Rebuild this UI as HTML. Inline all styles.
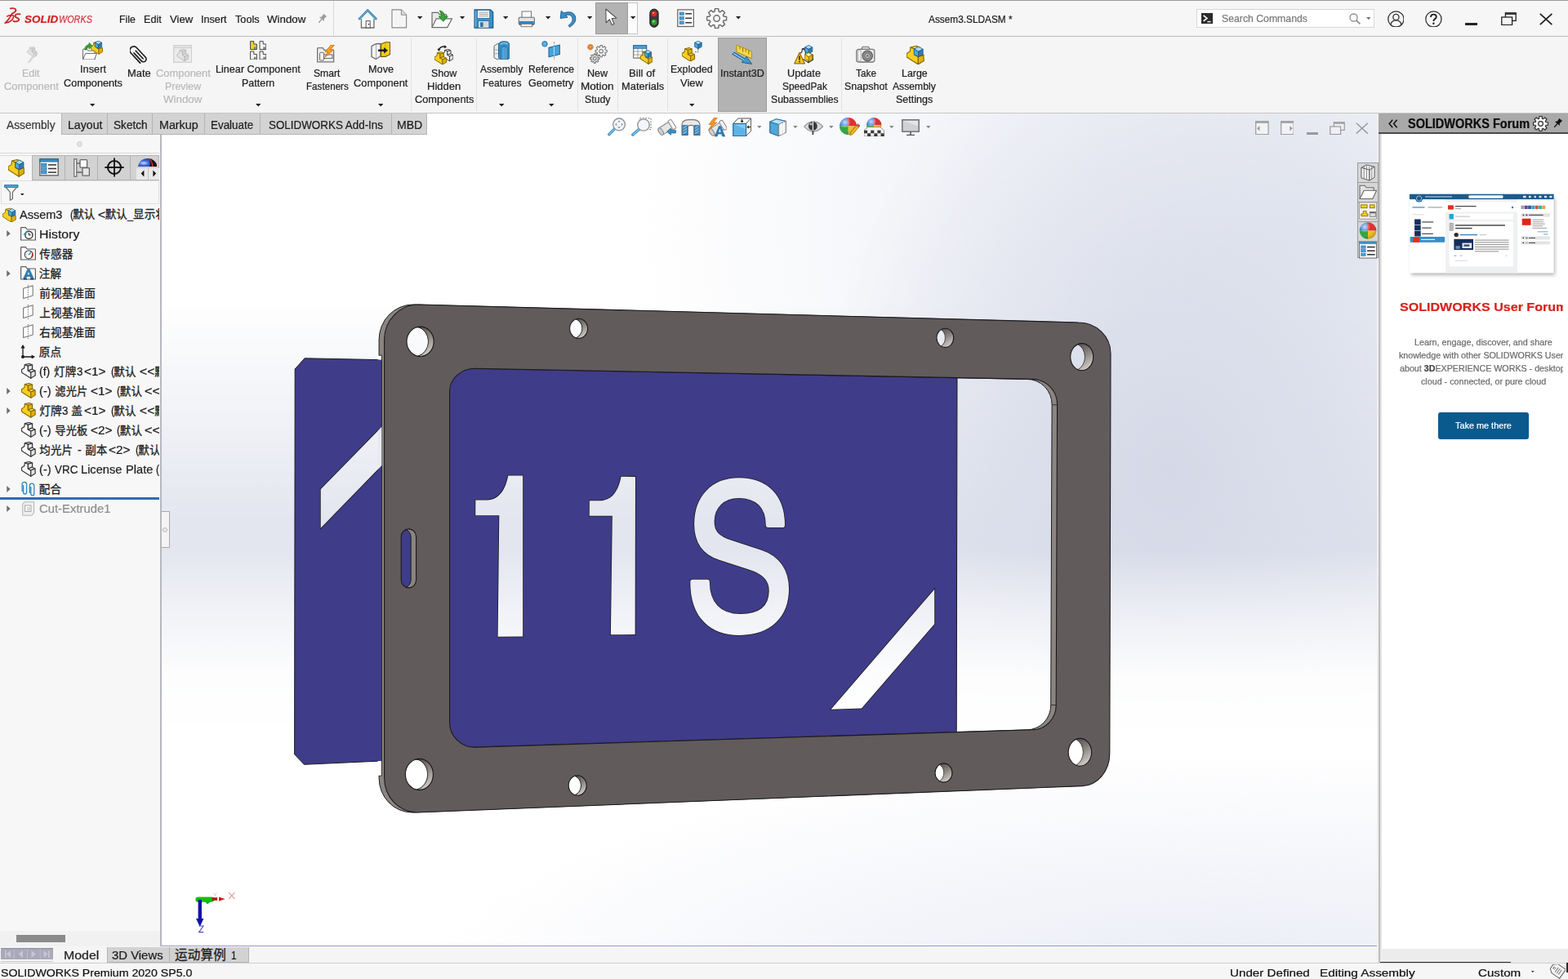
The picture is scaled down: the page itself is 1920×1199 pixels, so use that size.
<!DOCTYPE html><html><head><meta charset="utf-8"><title>SOLIDWORKS</title><style>
*{margin:0;padding:0}
html,body{width:1920px;height:1199px;overflow:hidden;background:#f5f5f5}
body{font-family:"Liberation Sans",sans-serif;position:relative}
.abs{position:absolute;display:block}
.t{position:absolute;white-space:pre;transform-origin:0 50%;display:block;-webkit-text-stroke:.22px currentColor}
.layer{position:absolute;left:0;top:0;height:1199px;overflow:hidden}
.cj{font-family:"Liberation Sans","Noto Sans CJK SC",sans-serif;fill:#1e1e1e;stroke:#1e1e1e;stroke-width:.3px;letter-spacing:.2px}
</style></head><body>
<div class="abs" id="vp" style="left:197.8px;top:139.2px;width:1488.6px;height:1019px;background:radial-gradient(ellipse 1000px 300px at 88% 106%, rgba(231,234,244,.95) 0%, rgba(231,234,244,0) 100%),linear-gradient(to bottom, rgba(255,255,255,0) 535px, rgba(255,255,255,.5) 610px, rgba(255,255,255,.93) 690px, #fff 770px),radial-gradient(ellipse 440px 570px at 1236px 440px, rgba(213,217,231,1) 0%, rgba(213,217,231,.6) 45%, rgba(213,217,231,0) 100%),radial-gradient(ellipse 820px 620px at 1400px 140px, rgba(229,232,241,.95) 0%, rgba(229,232,241,.5) 50%, rgba(229,232,241,0) 100%),linear-gradient(to bottom, rgba(227,230,239,0) 230px, rgba(227,230,239,1) 500px, rgba(227,230,239,1) 100%),#fff"></div>
<svg class="abs" style="left:0;top:0" width="1920" height="1199" viewBox="0 0 1920 1199">
<defs><linearGradient id="wallg" x1="0" y1="0" x2="0.4" y2="1"><stop offset="0" stop-color="#4d4848"/><stop offset=".55" stop-color="#8d8882"/><stop offset="1" stop-color="#cfcbc4"/></linearGradient><clipPath id="cwin"><path d="M582,451.3 L1264,464.4 A30.6,31 0 0 1 1294.6,495.8 L1293.2,863.5 A29.2,30 0 0 1 1264,893.8 L582,915.2 A31.4,30 0 0 1 550.6,885 L550.6,479 A31.4,28 0 0 1 582,451.3Z"/></clipPath><clipPath id="cslot"><path d="M491.2,657.5 a9.2,9.6 0 0 1 18.4,0 L509.6,710.3 a9.2,9.6 0 0 1 -18.4,0Z"/></clipPath></defs>
<mask id="pm" maskUnits="userSpaceOnUse" x="340" y="420" width="860" height="540"><rect x="340" y="420" width="860" height="540" fill="#fff"/><path d="M963.1,721.3C963.1,699.3 952.0,683.3 932.2,676.7L895.7,664.8C878.1,659.1 871.7,652.1 871.7,638.4C871.8,620.4 884.9,607.0 904.5,607.1C927.6,607.2 940.7,620.1 940.7,643.1L958.1,643.2C958.1,608.5 938.5,588.4 905.1,588.2C873.2,588.0 853.2,609.3 853.0,641.5C852.9,663.3 862.3,677.0 881.6,683.1L917.8,694.8C936.2,700.6 944.6,709.6 944.6,723.6C944.5,743.2 932.5,754.8 907.3,754.9C879.5,755.1 865.9,738.1 866.0,712.6L848.2,712.6C848.0,755.0 871.4,775.3 906.0,775.1C943.1,774.8 963.1,753.1 963.1,721.3Z" fill="#000" stroke="#000" stroke-width="5.8" stroke-linejoin="round"/><path d="M640.2,582.6L640.2,779.4L609.6,779.7L611.3,631.3L582.2,631.3L582.3,612.5L596.8,612.5C611.3,611.6 618.9,600.0 622.2,582.5Z M778.0,583.9L777.6,777.0L747.9,777.3L749.8,631.8L721.7,631.7L721.8,613.2L735.9,613.2C749.9,612.4 757.3,600.9 760.5,583.8Z M1144.2,721.7 L1144.2,764.2 L1055,867.5 L1017.5,868.7Z M392.7,599.3 L480,509.9 L480,557.1 L392.7,646.8Z" fill="#000"/></mask>
<g mask="url(#pm)"><path d="M361.2,452 L373,438.8 L1172,454.5 L1171.2,900 L372.5,936.3 L360.6,923.8Z" fill="#3f3c89"/><path d="M963.1,721.3C963.1,699.3 952.0,683.3 932.2,676.7L895.7,664.8C878.1,659.1 871.7,652.1 871.7,638.4C871.8,620.4 884.9,607.0 904.5,607.1C927.6,607.2 940.7,620.1 940.7,643.1L958.1,643.2C958.1,608.5 938.5,588.4 905.1,588.2C873.2,588.0 853.2,609.3 853.0,641.5C852.9,663.3 862.3,677.0 881.6,683.1L917.8,694.8C936.2,700.6 944.6,709.6 944.6,723.6C944.5,743.2 932.5,754.8 907.3,754.9C879.5,755.1 865.9,738.1 866.0,712.6L848.2,712.6C848.0,755.0 871.4,775.3 906.0,775.1C943.1,774.8 963.1,753.1 963.1,721.3Z" fill="none" stroke="#1c1a1e" stroke-width="7.3" stroke-linejoin="round"/><path d="M640.2,582.6L640.2,779.4L609.6,779.7L611.3,631.3L582.2,631.3L582.3,612.5L596.8,612.5C611.3,611.6 618.9,600.0 622.2,582.5Z M778.0,583.9L777.6,777.0L747.9,777.3L749.8,631.8L721.7,631.7L721.8,613.2L735.9,613.2C749.9,612.4 757.3,600.9 760.5,583.8Z M1144.2,721.7 L1144.2,764.2 L1055,867.5 L1017.5,868.7Z M392.7,599.3 L480,509.9 L480,557.1 L392.7,646.8Z" fill="none" stroke="#1c1a1e" stroke-width="1.6"/></g>
<path d="M361.2,452 L373,438.8 L1172,454.5 L1171.2,900 L372.5,936.3 L360.6,923.8Z" fill="none" stroke="#1c1a1e" stroke-width="1" stroke-linejoin="round"/>
<path d="M512.5,373 L1321,395 A39,38 0 0 1 1360,433 L1358.8,923 A34,40 0 0 1 1325,962.6 L511,995 A40.4,42 0 0 1 470.6,953 L470.6,416 A41.9,43 0 0 1 512.5,373Z M582,451.3 L1264,464.4 A30.6,31 0 0 1 1294.6,495.8 L1293.2,863.5 A29.2,30 0 0 1 1264,893.8 L582,915.2 A31.4,30 0 0 1 550.6,885 L550.6,479 A31.4,28 0 0 1 582,451.3Z M491.2,657.5 a9.2,9.6 0 0 1 18.4,0 L509.6,710.3 a9.2,9.6 0 0 1 -18.4,0Z M498.00,418.30 a16.60,18.20 0 1 0 33.20,0 a16.60,18.20 0 1 0 -33.20,0Z M1310.70,437.20 a14.00,16.60 0 1 0 28.00,0 a14.00,16.60 0 1 0 -28.00,0Z M1308.20,921.30 a14.20,16.90 0 1 0 28.40,0 a14.20,16.90 0 1 0 -28.40,0Z M496.40,948.40 a17.00,19.00 0 1 0 34.00,0 a17.00,19.00 0 1 0 -34.00,0Z M697.60,402.30 a11.00,12.00 0 1 0 22.00,0 a11.00,12.00 0 1 0 -22.00,0Z M1146.90,413.80 a10.40,11.60 0 1 0 20.80,0 a10.40,11.60 0 1 0 -20.80,0Z M1145.00,946.50 a10.50,11.60 0 1 0 21.00,0 a10.50,11.60 0 1 0 -21.00,0Z M696.20,962.00 a11.00,12.20 0 1 0 22.00,0 a11.00,12.20 0 1 0 -22.00,0Z" transform="translate(-6.5,0)" fill="#8a8580" fill-rule="evenodd" stroke="#1c1a1e" stroke-width="1"/>
<path d="M511.10,400.20 A16.90,18.50 0 1 1 511.10,436.40 A16.90,18.50 0 0 0 511.10,400.20 Z" fill="url(#wallg)" stroke="#1c1a1e" stroke-width=".7"/>
<path d="M1319.40,421.50 A14.30,16.90 0 1 1 1319.40,452.90 A14.30,16.90 0 0 0 1319.40,421.50 Z" fill="url(#wallg)" stroke="#1c1a1e" stroke-width=".7"/>
<path d="M1317.10,905.29 A14.50,17.20 0 1 1 1317.10,937.31 A14.50,17.20 0 0 0 1317.10,905.29 Z" fill="url(#wallg)" stroke="#1c1a1e" stroke-width=".7"/>
<path d="M509.90,929.50 A17.30,19.30 0 1 1 509.90,967.30 A17.30,19.30 0 0 0 509.90,929.50 Z" fill="url(#wallg)" stroke="#1c1a1e" stroke-width=".7"/>
<path d="M705.10,390.60 A11.30,12.30 0 1 1 705.10,414.00 A11.30,12.30 0 0 0 705.10,390.60 Z" fill="url(#wallg)" stroke="#1c1a1e" stroke-width=".7"/>
<path d="M1152.00,403.46 A10.70,11.90 0 1 1 1152.00,424.14 A10.70,11.90 0 0 0 1152.00,403.46 Z" fill="url(#wallg)" stroke="#1c1a1e" stroke-width=".7"/>
<path d="M1150.20,936.13 A10.80,11.90 0 1 1 1150.20,956.87 A10.80,11.90 0 0 0 1150.20,936.13 Z" fill="url(#wallg)" stroke="#1c1a1e" stroke-width=".7"/>
<path d="M703.70,950.11 A11.30,12.50 0 1 1 703.70,973.89 A11.30,12.50 0 0 0 703.70,950.11 Z" fill="url(#wallg)" stroke="#1c1a1e" stroke-width=".7"/>
<path d="M512.5,373 L1321,395 A39,38 0 0 1 1360,433 L1358.8,923 A34,40 0 0 1 1325,962.6 L511,995 A40.4,42 0 0 1 470.6,953 L470.6,416 A41.9,43 0 0 1 512.5,373Z M582,451.3 L1264,464.4 A30.6,31 0 0 1 1294.6,495.8 L1293.2,863.5 A29.2,30 0 0 1 1264,893.8 L582,915.2 A31.4,30 0 0 1 550.6,885 L550.6,479 A31.4,28 0 0 1 582,451.3Z M491.2,657.5 a9.2,9.6 0 0 1 18.4,0 L509.6,710.3 a9.2,9.6 0 0 1 -18.4,0Z M498.00,418.30 a16.60,18.20 0 1 0 33.20,0 a16.60,18.20 0 1 0 -33.20,0Z M1310.70,437.20 a14.00,16.60 0 1 0 28.00,0 a14.00,16.60 0 1 0 -28.00,0Z M1308.20,921.30 a14.20,16.90 0 1 0 28.40,0 a14.20,16.90 0 1 0 -28.40,0Z M496.40,948.40 a17.00,19.00 0 1 0 34.00,0 a17.00,19.00 0 1 0 -34.00,0Z M697.60,402.30 a11.00,12.00 0 1 0 22.00,0 a11.00,12.00 0 1 0 -22.00,0Z M1146.90,413.80 a10.40,11.60 0 1 0 20.80,0 a10.40,11.60 0 1 0 -20.80,0Z M1145.00,946.50 a10.50,11.60 0 1 0 21.00,0 a10.50,11.60 0 1 0 -21.00,0Z M696.20,962.00 a11.00,12.20 0 1 0 22.00,0 a11.00,12.20 0 1 0 -22.00,0Z" fill="#615b5b" fill-rule="evenodd" stroke="#1c1a1e" stroke-width="1.1"/>
<path d="M462.6,435.2H467.4V440.7H462.6Z M462.6,932.1H467.4V950.2H462.6Z" fill="#fff"/>
<path d="M462.6,440.7H467.4V932.1H462.6Z" fill="#3f3c89" mask="url(#pm)"/>
<path d="M463.9,435.2H467.4V950.2H463.6" fill="none" stroke="#1c1a1e" stroke-width=".9"/>
<path d="M462.4,527.9L467.4,522.8V570.1L462.4,575.2Z" fill="#e9ebf3"/>
<path d="M1288.2,495.8H1294.6 M1286.8,863.5H1293.2" stroke="#1c1a1e" stroke-width=".8"/>
</svg>
<div class="abs" style="left:0px;top:0px;width:1920px;height:45px;background:#f6f6f6;"></div>
<div class="abs" style="left:0px;top:0px;width:1920px;height:1px;background:#9a9a9a;"></div>
<div class="abs" style="left:0px;top:44px;width:1920px;height:1.4px;background:#bdbdbd;"></div>
<div class="abs" style="left:408.4px;top:1px;width:1px;height:43px;background:#d9d9d9;"></div>
<div class="abs" style="left:1465px;top:10.5px;width:217.5px;height:23.3px;background:#fff;border:1px solid #d6d6d6;box-sizing:border-box"></div>
<div class="abs" style="left:0px;top:45.4px;width:1920px;height:93px;background:#f5f5f5;"></div>
<div class="abs" style="left:878.8px;top:45.7px;width:60.4px;height:91.2px;background:#b3b3b3;border:1px solid #9c9c9c;box-sizing:border-box"></div>
<div class="abs" style="left:503.3px;top:47px;width:1px;height:89px;background:#e2e2e2;"></div>
<div class="abs" style="left:583.3px;top:47px;width:1px;height:89px;background:#e2e2e2;"></div>
<div class="abs" style="left:706.9px;top:47px;width:1px;height:89px;background:#e2e2e2;"></div>
<div class="abs" style="left:756.2px;top:47px;width:1px;height:89px;background:#e2e2e2;"></div>
<div class="abs" style="left:816.7px;top:47px;width:1px;height:89px;background:#e2e2e2;"></div>
<div class="abs" style="left:1029.8px;top:47px;width:1px;height:89px;background:#e2e2e2;"></div>
<div class="abs" style="left:0px;top:138px;width:1920px;height:1.2px;background:#c6c6c6;"></div>
<svg class="abs" style="left:110.30px;top:127.20px" width="6.4" height="3.4"><path d="M0,0H6.4L3.2,3.4Z" fill="#222"/></svg>
<svg class="abs" style="left:312.60px;top:127.20px" width="6.4" height="3.4"><path d="M0,0H6.4L3.2,3.4Z" fill="#222"/></svg>
<svg class="abs" style="left:463.00px;top:127.20px" width="6.4" height="3.4"><path d="M0,0H6.4L3.2,3.4Z" fill="#222"/></svg>
<svg class="abs" style="left:610.80px;top:127.20px" width="6.4" height="3.4"><path d="M0,0H6.4L3.2,3.4Z" fill="#222"/></svg>
<svg class="abs" style="left:671.60px;top:127.20px" width="6.4" height="3.4"><path d="M0,0H6.4L3.2,3.4Z" fill="#222"/></svg>
<svg class="abs" style="left:843.80px;top:127.20px" width="6.4" height="3.4"><path d="M0,0H6.4L3.2,3.4Z" fill="#222"/></svg>
<div class="abs" style="left:0px;top:139.2px;width:197.8px;height:26px;background:#f5f5f5;"></div>
<div class="abs" style="left:75.4px;top:139.2px;width:447.6px;height:25.4px;background:#d3d3d3;border:1px solid #b4b4b4;border-top:none;box-sizing:border-box"></div>
<div class="abs" style="left:131.3px;top:139.2px;width:1px;height:25px;background:#b4b4b4;"></div>
<div class="abs" style="left:186.4px;top:139.2px;width:1px;height:25px;background:#b4b4b4;"></div>
<div class="abs" style="left:250.3px;top:139.2px;width:1px;height:25px;background:#b4b4b4;"></div>
<div class="abs" style="left:318.3px;top:139.2px;width:1px;height:25px;background:#b4b4b4;"></div>
<div class="abs" style="left:478.6px;top:139.2px;width:1px;height:25px;background:#b4b4b4;"></div>
<div class="abs" style="left:0px;top:165.2px;width:196px;height:994px;background:#f7f7f7;"></div>
<div class="abs" style="left:0px;top:187.2px;width:196px;height:1px;background:#d9d9d9;"></div>
<div class="abs" style="left:93.6px;top:173.3px;width:7px;height:7px;border-radius:50%;box-sizing:border-box;border:1.6px solid #cfcfcf;background:#e3e3e3"></div>
<div class="abs" style="left:39.4px;top:190px;width:156px;height:30.6px;background:#d2d2d2;border:1px solid #b2b2b2;box-sizing:border-box"></div>
<div class="abs" style="left:0px;top:190px;width:39.4px;height:1px;background:#dcdcdc;"></div>
<div class="abs" style="left:79px;top:190px;width:1px;height:30.6px;background:#b2b2b2;"></div>
<div class="abs" style="left:119.4px;top:190px;width:1px;height:30.6px;background:#b2b2b2;"></div>
<div class="abs" style="left:159.4px;top:190px;width:1px;height:30.6px;background:#b2b2b2;"></div>
<div class="abs" style="left:166.8px;top:206px;width:28px;height:14px;background:#e9e9e9;"></div>
<div class="abs" style="left:181px;top:206px;width:1px;height:14px;background:#c2c2c2;"></div>
<svg class="abs" style="left:172px;top:208px" width="20" height="9"><path d="M4.4,0.4V8.4L0.6,4.4Z M15.4,0.4V8.4L19.2,4.4Z" fill="#111"/></svg>
<div class="abs" style="left:1.3px;top:221.2px;width:193.6px;height:29px;background:#f7f7f7;border:1px solid #dfdfdf;box-sizing:border-box"></div>
<svg class="abs" style="left:25.10px;top:236.60px" width="4.6" height="2.8"><path d="M0,0H4.6L2.3,2.8Z" fill="#222"/></svg>
<svg class="abs" style="left:8.2px;top:282.0px" width="5" height="8"><path d="M0.3,0L4.6,4L0.3,8Z" fill="#6b6b6b"/></svg>
<svg class="abs" style="left:8.2px;top:330.5px" width="5" height="8"><path d="M0.3,0L4.6,4L0.3,8Z" fill="#6b6b6b"/></svg>
<svg class="abs" style="left:8.2px;top:474.5px" width="5" height="8"><path d="M0.3,0L4.6,4L0.3,8Z" fill="#6b6b6b"/></svg>
<svg class="abs" style="left:8.2px;top:498.5px" width="5" height="8"><path d="M0.3,0L4.6,4L0.3,8Z" fill="#6b6b6b"/></svg>
<svg class="abs" style="left:8.2px;top:594.5px" width="5" height="8"><path d="M0.3,0L4.6,4L0.3,8Z" fill="#6b6b6b"/></svg>
<div class="abs" style="left:0px;top:608.9px;width:195px;height:3.1px;background:#2f6db3;"></div>
<svg class="abs" style="left:8.2px;top:618.5px" width="5" height="8"><path d="M0.3,0L4.6,4L0.3,8Z" fill="#6b6b6b"/></svg>
<div class="abs" style="left:0px;top:1159px;width:1920px;height:20px;background:#f5f5f5;"></div>
<div class="abs" style="left:197.8px;top:1157.6px;width:1488.6px;height:1.4px;background:#9b9bc4;"></div>
<div class="abs" style="left:1.3px;top:1160.8px;width:63.8px;height:14.6px;background:#a9a9b9;border-top:1.4px solid #8e8ea2;box-sizing:border-box"></div>
<svg class="abs" style="left:1.3px;top:1162.2px" width="64" height="13"><g fill="#c6c6d2"><path d="M5,2h1.6v9H5z M12,2v9L6.8,6.5z M27,2v9l-5.6-4.5z M37.5,2v9l5.6-4.5z M52.5,2v9l5.2-4.5z M58,2h1.6v9H58z"/></g><g stroke="#bcbccb"><path d="M16.3,0V13 M32.3,0V13 M48.3,0V13"/></g></svg>
<div class="abs" style="left:1.3px;top:1177.4px;width:63.8px;height:1px;background:#c9c9c9;"></div>
<div class="abs" style="left:130.6px;top:1160px;width:174.2px;height:18.8px;background:#d2d2d2;border:1px solid #b4b4b4;border-top:none;box-sizing:border-box"></div>
<div class="abs" style="left:206.8px;top:1160px;width:1px;height:18.4px;background:#b4b4b4;"></div>
<div class="abs" style="left:0px;top:1178.8px;width:1920px;height:20.2px;background:#f6f6f6;"></div>
<div class="abs" style="left:0px;top:1178.6px;width:1920px;height:1px;background:#cfcfcf;"></div>
<svg class="abs" style="left:1875.00px;top:1189.20px" width="3.6" height="2.2"><path d="M0,0H3.6L1.8,2.2Z" fill="#333"/></svg>
<div class="abs" style="left:1686.4px;top:139.2px;width:3.6px;height:1040px;background:#f0f0f0;"></div>
<div class="abs" style="left:1688px;top:139.2px;width:1.6px;height:1040px;background:#bdbdbd;"></div>
<div class="abs" style="left:1690px;top:163.6px;width:230px;height:998.2px;background:#fff;"></div>
<div class="abs" style="left:1690px;top:163.6px;width:1.6px;height:998px;background:#e4e4e4;"></div>
<div class="abs" style="left:1690px;top:1161.6px;width:230px;height:17px;background:#ececec;"></div>
<div class="abs" style="left:1690px;top:1177.6px;width:160px;height:1.6px;background:#2b2b2b;"></div>
<div class="abs" style="left:1918.4px;top:1179px;width:1.6px;height:12px;background:#2b2b2b;"></div>
<div class="abs" style="left:1687.6px;top:139.4px;width:232.4px;height:24.2px;background:#a9a9a9;"></div>
<div class="abs" style="left:1687.6px;top:162.2px;width:232.4px;height:1.6px;background:#4a4a4a;"></div>
<svg class="abs" style="left:1699.6px;top:145.6px" width="12" height="11"><path d="M5.2,.8L1.2,5.5L5.2,10.2 M10.6,.8L6.6,5.5L10.6,10.2" fill="none" stroke="#111" stroke-width="1.5"/></svg>
<div class="abs" style="left:1761px;top:505px;width:111.2px;height:32.8px;background:#0b5a8d;border-radius:3px"></div>
<svg class="abs" style="left:1720px;top:232px" width="192" height="112" viewBox="1720 232 192 112"><defs><filter id="ts" x="-10%" y="-10%" width="120%" height="130%"><feGaussianBlur stdDeviation="2.2"/></filter></defs><rect x="1728" y="242" width="176" height="95" fill="#000" opacity=".28" filter="url(#ts)"/><rect x="1726" y="237.7" width="176.6" height="96.7" fill="#fff"/><rect x="1770" y="244" width="88" height="90.4" fill="#eff0f1"/><rect x="1726" y="237.7" width="176.6" height="6.4" fill="#1b5b8c"/><circle cx="1737.6" cy="243" r="4.6" fill="#1b5b8c"/><circle cx="1737.6" cy="243" r="3.1" fill="none" stroke="#cfe0ee" stroke-width=".7"/><rect x="1798.4" y="239.2" width="42" height="3.6" rx="1" fill="#fff"/><rect x="1745" y="240.3" width="33" height="1.3" fill="#9fc0dc"/><g fill="#dfe9f2"><rect x="1865" y="239.8" width="3.6" height="2.4"/><rect x="1872" y="239.8" width="2.6" height="2.4"/><rect x="1878.6" y="239.8" width="2.2" height="2.4"/><rect x="1884.6" y="239.8" width="2.8" height="2.4"/><rect x="1891" y="239.8" width="3" height="2.4"/><rect x="1897.4" y="239.8" width="3" height="2.4"/></g><rect x="1729.5" y="253.4" width="15" height="1.1" fill="#2a78b8"/><rect x="1748.6" y="253.4" width="17.6" height="1.1" fill="#9a9a9a"/><rect x="1729.6" y="262.4" width="14" height=".9" fill="#d4d4d4"/><rect x="1732.1" y="268.5" width="7.6" height="6.6" fill="#14305e"/><rect x="1741.2" y="271.3" width="14" height="1.3" fill="#555"/><rect x="1732.1" y="275.7" width="7.6" height="6.6" fill="#14305e"/><rect x="1741.2" y="278.5" width="11.4" height="1.3" fill="#555"/><rect x="1732.1" y="282.9" width="7.6" height="6.6" fill="#14305e"/><rect x="1741.2" y="285.7" width="13.6" height="1.3" fill="#555"/><rect x="1726.6" y="290" width="42.6" height="6.8" fill="#3a8cc6"/><rect x="1730" y="290.6" width="8" height="6.2" fill="#e0301e"/><rect x="1740" y="292.8" width="17" height="1.2" fill="#e8f1f8"/><rect x="1770" y="247.5" width="88" height="12" fill="#fff"/><rect x="1773" y="251.4" width="6.9" height="5.2" fill="#e0301e"/><rect x="1782" y="252" width="25.6" height="1.2" fill="#444"/><rect x="1782" y="255.2" width="7" height=".9" fill="#999"/><circle cx="1852" cy="254" r="1.2" fill="#2a78b8"/><rect x="1774.5" y="261.5" width="78.4" height="7.4" fill="#fff"/><rect x="1774.5" y="262" width="5.4" height="6.5" fill="#1ea7d8"/><rect x="1782" y="264.6" width="18" height="1" fill="#bbb"/><rect x="1774.5" y="271.4" width="78.4" height="55" fill="#fff"/><rect x="1775" y="273" width="4.6" height="9.6" fill="#b9b9b9" stroke="#888" stroke-width=".4"/><rect x="1782" y="275.2" width="61" height="1.5" fill="#4a4a4a"/><rect x="1782" y="278.8" width="20.6" height="1.5" fill="#4a4a4a"/><circle cx="1783.2" cy="287.6" r="2.7" fill="#3a2a28"/><rect x="1788" y="287" width="21" height="1.2" fill="#2a78b8"/><rect x="1812" y="287.2" width="8" height=".9" fill="#bbb"/><rect x="1780.4" y="292.8" width="23.6" height="13.2" fill="#132e5c"/><rect x="1790.5" y="297.6" width="11.6" height="6.4" fill="#e8edf3"/><rect x="1792.4" y="299.4" width="7" height="2.4" fill="#3b4f6e"/><rect x="1782.4" y="301.2" width="5.4" height="3.6" fill="#6f8fb0"/><rect x="1806" y="293.6" width="41.6" height="1" fill="#8c8c8c"/><rect x="1806" y="296.4" width="41.6" height="1" fill="#8c8c8c"/><rect x="1806" y="299.1" width="41.6" height="1" fill="#8c8c8c"/><rect x="1806" y="301.9" width="41.6" height="1" fill="#8c8c8c"/><rect x="1806" y="304.6" width="41.6" height="1" fill="#8c8c8c"/><rect x="1806" y="307.4" width="29" height="1" fill="#8c8c8c"/><rect x="1780.4" y="312.6" width="3" height="1" fill="#999"/><rect x="1787.4" y="312.6" width="3.4" height="1" fill="#bbb"/><rect x="1843.6" y="312.6" width="1.6" height="1" fill="#bbb"/><rect x="1782" y="318.8" width="15" height=".8" fill="#ccc"/><rect x="1862.5" y="251.7" width="3.9" height="4.4" rx=".6" fill="#9aa0a8"/><rect x="1866.8" y="251.7" width="3.9" height="4.4" rx=".6" fill="#7a3b9a"/><rect x="1871.1" y="251.7" width="3.9" height="4.4" rx=".6" fill="#2a5fa8"/><rect x="1875.4" y="251.7" width="3.9" height="4.4" rx=".6" fill="#35a0d8"/><rect x="1879.7" y="251.7" width="3.9" height="4.4" rx=".6" fill="#e04a3a"/><rect x="1884.0" y="251.7" width="3.9" height="4.4" rx=".6" fill="#2fb5a0"/><rect x="1888.3" y="251.7" width="3.9" height="4.4" rx=".6" fill="#f0a030"/><rect x="1862.5" y="261.3" width="35.4" height="4.3" fill="#e3e3e3"/><rect x="1872" y="262.8" width="17.6" height="1.2" fill="#555"/><rect x="1864.6" y="262.6" width="1.6" height="1.6" fill="#333"/><rect x="1868.4" y="262.6" width="2" height="1.6" fill="#333"/><rect x="1863.7" y="267.7" width="10.8" height="8.1" fill="#e0241a"/><rect x="1876.4" y="268.6" width="14" height="1" fill="#9a9a9a"/><rect x="1876.4" y="271.2" width="13.5" height="1" fill="#9a9a9a"/><rect x="1876.4" y="273.7" width="15.4" height="1" fill="#9a9a9a"/><rect x="1876.4" y="276.2" width="12.6" height="1" fill="#9a9a9a"/><rect x="1876.4" y="278.8" width="17.5" height="1" fill="#9a9a9a"/><rect x="1882.6" y="283.4" width="13" height=".9" fill="#5a9fd0"/><rect x="1890" y="286.4" width="5.6" height=".9" fill="#5a9fd0"/><rect x="1862.5" y="289.5" width="35.4" height="3.9" fill="#e3e3e3"/><rect x="1872" y="290.9" width="8" height="1.1" fill="#555"/><rect x="1864.6" y="290.6" width="1.4" height="1.5" fill="#333"/><rect x="1868.4" y="290.4" width="2" height="2" fill="#777"/><rect x="1862.5" y="295.5" width="35.4" height="3.9" fill="#e3e3e3"/><rect x="1872" y="296.9" width="8" height="1.1" fill="#555"/><rect x="1864.6" y="296.6" width="1.4" height="1.5" fill="#333"/><rect x="1868.4" y="296.4" width="2" height="2" fill="#aaa"/></svg>
<div class="layer" style="width:195px"><span class="t" id="t55" style="left:24.36px;top:255.70px;font-size:14.3px;line-height:14.3px;color:#1e1e1e;transform:scaleX(1.0151);">Assem3</span><span class="t" id="t56" style="left:85.66px;top:255.70px;font-size:14.3px;line-height:14.3px;color:#1e1e1e;transform:scaleX(0.8574);">(</span><span class="t" id="t57" style="left:119.86px;top:255.70px;font-size:14.3px;line-height:14.3px;color:#1e1e1e;transform:scaleX(1.0984);">&lt;</span><span class="t" id="t58" style="left:155.96px;top:255.70px;font-size:14.3px;line-height:14.3px;color:#1e1e1e;transform:scaleX(0.8859);">_</span><span class="t" id="t59" style="left:47.86px;top:279.70px;font-size:14.3px;line-height:14.3px;color:#1e1e1e;transform:scaleX(1.1088);">History</span><span class="t" id="t60" style="left:48.16px;top:448.20px;font-size:14.3px;line-height:14.3px;color:#1e1e1e;transform:scaleX(0.9848);">(f)</span><span class="t" id="t61" style="left:93.76px;top:448.20px;font-size:14.3px;line-height:14.3px;color:#1e1e1e;transform:scaleX(0.9359);">3</span><span class="t" id="t62" style="left:103.16px;top:448.20px;font-size:14.3px;line-height:14.3px;color:#1e1e1e;transform:scaleX(1.0755);">&lt;1&gt;</span><span class="t" id="t63" style="left:135.66px;top:448.20px;font-size:14.3px;line-height:14.3px;color:#1e1e1e;transform:scaleX(0.8774);">(</span><span class="t" id="t64" style="left:170.66px;top:448.20px;font-size:14.3px;line-height:14.3px;color:#1e1e1e;transform:scaleX(1.0934);">&lt;&lt;</span><span class="t" id="t65" style="left:48.16px;top:472.20px;font-size:14.3px;line-height:14.3px;color:#1e1e1e;transform:scaleX(1.0276);">(-)</span><span class="t" id="t66" style="left:110.66px;top:472.20px;font-size:14.3px;line-height:14.3px;color:#1e1e1e;transform:scaleX(1.0755);">&lt;1&gt;</span><span class="t" id="t67" style="left:143.16px;top:472.20px;font-size:14.3px;line-height:14.3px;color:#1e1e1e;transform:scaleX(0.8774);">(</span><span class="t" id="t68" style="left:176.96px;top:472.20px;font-size:14.3px;line-height:14.3px;color:#1e1e1e;transform:scaleX(1.1345);">&lt;&lt;</span><span class="t" id="t69" style="left:76.26px;top:496.20px;font-size:14.3px;line-height:14.3px;color:#1e1e1e;transform:scaleX(0.9359);">3</span><span class="t" id="t70" style="left:103.16px;top:496.20px;font-size:14.3px;line-height:14.3px;color:#1e1e1e;transform:scaleX(1.0755);">&lt;1&gt;</span><span class="t" id="t71" style="left:135.66px;top:496.20px;font-size:14.3px;line-height:14.3px;color:#1e1e1e;transform:scaleX(0.8774);">(</span><span class="t" id="t72" style="left:170.66px;top:496.20px;font-size:14.3px;line-height:14.3px;color:#1e1e1e;transform:scaleX(1.0934);">&lt;&lt;</span><span class="t" id="t73" style="left:48.16px;top:520.20px;font-size:14.3px;line-height:14.3px;color:#1e1e1e;transform:scaleX(1.0276);">(-)</span><span class="t" id="t74" style="left:110.66px;top:520.20px;font-size:14.3px;line-height:14.3px;color:#1e1e1e;transform:scaleX(1.0755);">&lt;2&gt;</span><span class="t" id="t75" style="left:143.16px;top:520.20px;font-size:14.3px;line-height:14.3px;color:#1e1e1e;transform:scaleX(0.8774);">(</span><span class="t" id="t76" style="left:176.96px;top:520.20px;font-size:14.3px;line-height:14.3px;color:#1e1e1e;transform:scaleX(1.1345);">&lt;&lt;</span><span class="t" id="t77" style="left:94.96px;top:544.20px;font-size:14.3px;line-height:14.3px;color:#1e1e1e;transform:scaleX(1.0174);">-</span><span class="t" id="t78" style="left:133.16px;top:544.20px;font-size:14.3px;line-height:14.3px;color:#1e1e1e;transform:scaleX(1.0755);">&lt;2&gt;</span><span class="t" id="t79" style="left:165.66px;top:544.20px;font-size:14.3px;line-height:14.3px;color:#1e1e1e;transform:scaleX(0.8774);">(</span><span class="t" id="t80" style="left:48.16px;top:568.20px;font-size:14.3px;line-height:14.3px;color:#1e1e1e;transform:scaleX(1.0276);">(-)</span><span class="t" id="t81" style="left:66.86px;top:568.20px;font-size:14.3px;line-height:14.3px;color:#1e1e1e;transform:scaleX(0.9396);">VRC</span><span class="t" id="t82" style="left:99.36px;top:568.20px;font-size:14.3px;line-height:14.3px;color:#1e1e1e;transform:scaleX(1.0222);">License</span><span class="t" id="t83" style="left:153.76px;top:568.20px;font-size:14.3px;line-height:14.3px;color:#1e1e1e;transform:scaleX(1.0238);">Plate</span><span class="t" id="t84" style="left:191.26px;top:568.20px;font-size:14.3px;line-height:14.3px;color:#1e1e1e;transform:scaleX(0.8774);">(</span><span class="t" id="t85" style="left:48.16px;top:616.20px;font-size:14.3px;line-height:14.3px;color:#8e8e8e;transform:scaleX(1.0391);">Cut-Extrude1</span><svg class="abs" style="left:0;top:0" width="195" height="1199" viewBox="0 0 195 1199"><text class="cj" x="89.13" y="267.45" font-size="13.54">默认</text><text class="cj" x="128.63" y="267.45" font-size="13.54">默认</text><text class="cj" x="162.93" y="267.45" font-size="13.56">显示状</text><text class="cj" x="48.23" y="315.65" font-size="13.56">传感器</text><text class="cj" x="47.73" y="339.67" font-size="13.59">注解</text><text class="cj" x="48.23" y="363.67" font-size="13.59">前视基准面</text><text class="cj" x="48.23" y="387.67" font-size="13.59">上视基准面</text><text class="cj" x="48.23" y="411.67" font-size="13.59">右视基准面</text><text class="cj" x="47.73" y="435.67" font-size="13.59">原点</text><text class="cj" x="66.03" y="459.65" font-size="13.54">灯牌</text><text class="cj" x="139.33" y="459.65" font-size="13.54">默认</text><text class="cj" x="189.13" y="459.67" font-size="13.59">默</text><text class="cj" x="67.24" y="483.53" font-size="13.23">滤光片</text><text class="cj" x="146.83" y="483.65" font-size="13.54">默认</text><text class="cj" x="48.23" y="507.70" font-size="13.69">灯牌</text><text class="cj" x="87.33" y="507.67" font-size="13.59">盖</text><text class="cj" x="139.33" y="507.65" font-size="13.54">默认</text><text class="cj" x="189.13" y="507.67" font-size="13.59">默</text><text class="cj" x="67.24" y="531.53" font-size="13.23">导光板</text><text class="cj" x="146.83" y="531.65" font-size="13.54">默认</text><text class="cj" x="48.23" y="555.63" font-size="13.49">均光片</text><text class="cj" x="104.13" y="555.65" font-size="13.54">副本</text><text class="cj" x="169.33" y="555.65" font-size="13.54">默认</text><text class="cj" x="47.73" y="603.67" font-size="13.59">配合</text></svg></div>
<div class="abs" style="left:195px;top:165.2px;width:1.2px;height:994px;background:#f7f7f7;"></div>
<div class="abs" style="left:196.2px;top:165.2px;width:1.6px;height:994px;background:#b7b7bf;"></div>
<div class="abs" style="left:0px;top:1140px;width:196px;height:18.6px;background:#f1f1f1;"></div>
<div class="abs" style="left:19.7px;top:1144.7px;width:60.3px;height:9.2px;background:#8b8b8b;"></div>
<div class="abs" style="left:197.6px;top:626.3px;width:10.2px;height:45.2px;background:#f4f4f4;border:1px solid #a9a9ad;border-left:none;box-sizing:border-box"></div>
<div class="abs" style="left:198.6px;top:645.6px;width:6.8px;height:6.8px;border-radius:50%;box-sizing:border-box;border:1.4px solid #b8b8b8;background:#ececec"></div>
<div class="layer" style="width:1914px"><span class="t" id="t94" style="left:1713.80px;top:368.33px;font-size:15.5px;line-height:15.5px;color:#d5241c;font-weight:bold;transform:scaleX(1.0368);">SOLIDWORKS User Forum</span><span class="t" id="t95" style="left:1732.41px;top:413.69px;font-size:11px;line-height:11px;color:#6a6a6a;transform:scaleX(0.9784);">Learn, engage, discover, and share</span><span class="t" id="t96" style="left:1713.11px;top:429.59px;font-size:11px;line-height:11px;color:#6a6a6a;transform:scaleX(0.9718);">knowledge with other SOLIDWORKS Users</span><span class="t" id="t97" style="left:1713.71px;top:445.69px;font-size:11px;line-height:11px;color:#6a6a6a;transform:scaleX(0.9717);">about <b style="color:#444">3D</b>EXPERIENCE WORKS - desktop,</span><span class="t" id="t98" style="left:1740.31px;top:461.69px;font-size:11px;line-height:11px;color:#6a6a6a;transform:scaleX(0.9745);">cloud - connected, or pure cloud</span></div>
<span class="t" id="t1" style="left:146.43px;top:18.13px;font-size:12.6px;line-height:12.6px;color:#1e1e1e;transform:scaleX(0.9817);">File</span>
<span class="t" id="t2" style="left:176.43px;top:18.13px;font-size:12.6px;line-height:12.6px;color:#1e1e1e;transform:scaleX(1.0061);">Edit</span>
<span class="t" id="t3" style="left:208.43px;top:18.13px;font-size:12.6px;line-height:12.6px;color:#1e1e1e;transform:scaleX(1.0420);">View</span>
<span class="t" id="t4" style="left:246.43px;top:18.13px;font-size:12.6px;line-height:12.6px;color:#1e1e1e;transform:scaleX(1.0042);">Insert</span>
<span class="t" id="t5" style="left:288.23px;top:18.13px;font-size:12.6px;line-height:12.6px;color:#1e1e1e;transform:scaleX(1.0115);">Tools</span>
<span class="t" id="t6" style="left:327.43px;top:18.13px;font-size:12.6px;line-height:12.6px;color:#1e1e1e;transform:scaleX(1.0585);">Window</span>
<span class="t" id="t7" style="left:1137.03px;top:17.73px;font-size:12.6px;line-height:12.6px;color:#1e1e1e;transform:scaleX(0.9388);">Assem3.SLDASM *</span>
<span class="t" id="t8" style="left:30.41px;top:17.03px;font-size:13.2px;line-height:13.2px;color:#cf2228;font-weight:bold;transform:scaleX(1.0197);font-style:italic;">SOLID</span>
<span class="t" id="t9" style="left:71.81px;top:17.03px;font-size:13.2px;line-height:13.2px;color:#d4343a;transform:scaleX(0.8198);font-style:italic;">WORKS</span>
<span class="t" id="t10" style="left:1495.72px;top:16.96px;font-size:12.8px;line-height:12.8px;color:#7a7a7a;transform:scaleX(0.9577);">Search Commands</span>
<span class="t" id="t11" style="left:27.13px;top:83.53px;font-size:12.6px;line-height:12.6px;color:#b9b9b9;transform:scaleX(0.9879);">Edit</span>
<span class="t" id="t12" style="left:5.23px;top:100.13px;font-size:12.6px;line-height:12.6px;color:#b9b9b9;transform:scaleX(1.0251);">Component</span>
<span class="t" id="t13" style="left:97.73px;top:78.53px;font-size:12.6px;line-height:12.6px;color:#1e1e1e;transform:scaleX(1.0136);">Insert</span>
<span class="t" id="t14" style="left:78.23px;top:95.63px;font-size:12.6px;line-height:12.6px;color:#1e1e1e;transform:scaleX(1.0075);">Components</span>
<span class="t" id="t15" style="left:156.13px;top:83.53px;font-size:12.6px;line-height:12.6px;color:#1e1e1e;transform:scaleX(1.0298);">Mate</span>
<span class="t" id="t16" style="left:191.13px;top:83.53px;font-size:12.6px;line-height:12.6px;color:#b9b9b9;transform:scaleX(1.0267);">Component</span>
<span class="t" id="t17" style="left:201.93px;top:100.13px;font-size:12.6px;line-height:12.6px;color:#b9b9b9;transform:scaleX(0.9874);">Preview</span>
<span class="t" id="t18" style="left:200.43px;top:116.43px;font-size:12.6px;line-height:12.6px;color:#b9b9b9;transform:scaleX(1.0585);">Window</span>
<span class="t" id="t19" style="left:264.03px;top:78.53px;font-size:12.6px;line-height:12.6px;color:#1e1e1e;transform:scaleX(1.0022);">Linear Component</span>
<span class="t" id="t20" style="left:295.73px;top:95.63px;font-size:12.6px;line-height:12.6px;color:#1e1e1e;transform:scaleX(0.9911);">Pattern</span>
<span class="t" id="t21" style="left:384.03px;top:83.53px;font-size:12.6px;line-height:12.6px;color:#1e1e1e;transform:scaleX(0.9657);">Smart</span>
<span class="t" id="t22" style="left:375.03px;top:100.13px;font-size:12.6px;line-height:12.6px;color:#1e1e1e;transform:scaleX(0.9256);">Fasteners</span>
<span class="t" id="t23" style="left:451.13px;top:78.53px;font-size:12.6px;line-height:12.6px;color:#1e1e1e;transform:scaleX(1.0108);">Move</span>
<span class="t" id="t24" style="left:433.43px;top:95.63px;font-size:12.6px;line-height:12.6px;color:#1e1e1e;transform:scaleX(1.0205);">Component</span>
<span class="t" id="t25" style="left:527.73px;top:83.53px;font-size:12.6px;line-height:12.6px;color:#1e1e1e;transform:scaleX(0.9948);">Show</span>
<span class="t" id="t26" style="left:522.93px;top:100.13px;font-size:12.6px;line-height:12.6px;color:#1e1e1e;transform:scaleX(1.0358);">Hidden</span>
<span class="t" id="t27" style="left:507.73px;top:116.43px;font-size:12.6px;line-height:12.6px;color:#1e1e1e;transform:scaleX(1.0146);">Components</span>
<span class="t" id="t28" style="left:588.23px;top:78.53px;font-size:12.6px;line-height:12.6px;color:#1e1e1e;transform:scaleX(0.9552);">Assembly</span>
<span class="t" id="t29" style="left:590.73px;top:95.63px;font-size:12.6px;line-height:12.6px;color:#1e1e1e;transform:scaleX(0.9567);">Features</span>
<span class="t" id="t30" style="left:647.43px;top:78.53px;font-size:12.6px;line-height:12.6px;color:#1e1e1e;transform:scaleX(0.9627);">Reference</span>
<span class="t" id="t31" style="left:647.43px;top:95.63px;font-size:12.6px;line-height:12.6px;color:#1e1e1e;transform:scaleX(1.0024);">Geometry</span>
<span class="t" id="t32" style="left:718.83px;top:83.53px;font-size:12.6px;line-height:12.6px;color:#1e1e1e;transform:scaleX(1.0014);">New</span>
<span class="t" id="t33" style="left:711.43px;top:100.13px;font-size:12.6px;line-height:12.6px;color:#1e1e1e;transform:scaleX(1.0746);">Motion</span>
<span class="t" id="t34" style="left:715.73px;top:116.43px;font-size:12.6px;line-height:12.6px;color:#1e1e1e;transform:scaleX(0.9792);">Study</span>
<span class="t" id="t35" style="left:770.23px;top:83.53px;font-size:12.6px;line-height:12.6px;color:#1e1e1e;transform:scaleX(1.0430);">Bill of</span>
<span class="t" id="t36" style="left:760.93px;top:100.13px;font-size:12.6px;line-height:12.6px;color:#1e1e1e;transform:scaleX(1.0222);">Materials</span>
<span class="t" id="t37" style="left:821.33px;top:78.53px;font-size:12.6px;line-height:12.6px;color:#1e1e1e;transform:scaleX(0.9855);">Exploded</span>
<span class="t" id="t38" style="left:833.23px;top:95.63px;font-size:12.6px;line-height:12.6px;color:#1e1e1e;transform:scaleX(1.0272);">View</span>
<span class="t" id="t39" style="left:881.73px;top:83.53px;font-size:12.6px;line-height:12.6px;color:#1e1e1e;transform:scaleX(0.9969);">Instant3D</span>
<span class="t" id="t40" style="left:964.43px;top:83.53px;font-size:12.6px;line-height:12.6px;color:#1e1e1e;transform:scaleX(1.0081);">Update</span>
<span class="t" id="t41" style="left:957.73px;top:100.13px;font-size:12.6px;line-height:12.6px;color:#1e1e1e;transform:scaleX(0.9454);">SpeedPak</span>
<span class="t" id="t42" style="left:943.63px;top:116.43px;font-size:12.6px;line-height:12.6px;color:#1e1e1e;transform:scaleX(0.9686);">Subassemblies</span>
<span class="t" id="t43" style="left:1047.73px;top:83.53px;font-size:12.6px;line-height:12.6px;color:#1e1e1e;transform:scaleX(0.9383);">Take</span>
<span class="t" id="t44" style="left:1034.43px;top:100.13px;font-size:12.6px;line-height:12.6px;color:#1e1e1e;transform:scaleX(0.9931);">Snapshot</span>
<span class="t" id="t45" style="left:1104.03px;top:83.53px;font-size:12.6px;line-height:12.6px;color:#1e1e1e;transform:scaleX(0.9854);">Large</span>
<span class="t" id="t46" style="left:1093.23px;top:100.13px;font-size:12.6px;line-height:12.6px;color:#1e1e1e;transform:scaleX(0.9661);">Assembly</span>
<span class="t" id="t47" style="left:1096.93px;top:116.43px;font-size:12.6px;line-height:12.6px;color:#1e1e1e;transform:scaleX(0.9920);">Settings</span>
<span class="t" id="t48" style="left:8.38px;top:146.92px;font-size:13.8px;line-height:13.8px;color:#3a3a3a;transform:scaleX(0.9957);">Assembly</span>
<span class="t" id="t49" style="left:83.18px;top:146.92px;font-size:13.8px;line-height:13.8px;color:#1e1e1e;transform:scaleX(1.0254);">Layout</span>
<span class="t" id="t50" style="left:139.18px;top:146.92px;font-size:13.8px;line-height:13.8px;color:#1e1e1e;transform:scaleX(0.9867);">Sketch</span>
<span class="t" id="t51" style="left:195.38px;top:146.92px;font-size:13.8px;line-height:13.8px;color:#1e1e1e;transform:scaleX(1.0357);">Markup</span>
<span class="t" id="t52" style="left:258.38px;top:146.92px;font-size:13.8px;line-height:13.8px;color:#1e1e1e;transform:scaleX(0.9711);">Evaluate</span>
<span class="t" id="t53" style="left:328.98px;top:146.92px;font-size:13.8px;line-height:13.8px;color:#1e1e1e;transform:scaleX(0.9711);">SOLIDWORKS Add-Ins</span>
<span class="t" id="t54" style="left:485.88px;top:146.92px;font-size:13.8px;line-height:13.8px;color:#1e1e1e;transform:scaleX(1.0207);">MBD</span>
<span class="t" id="t86" style="left:78.08px;top:1164.12px;font-size:13.8px;line-height:13.8px;color:#1e1e1e;transform:scaleX(1.1537);">Model</span>
<span class="t" id="t87" style="left:136.88px;top:1164.12px;font-size:13.8px;line-height:13.8px;color:#1e1e1e;transform:scaleX(1.0783);">3D Views</span>
<span class="t" id="t88" style="left:282.78px;top:1164.12px;font-size:13.8px;line-height:13.8px;color:#1e1e1e;transform:scaleX(0.8553);">1</span>
<span class="t" id="t89" style="left:0.70px;top:1184.84px;font-size:13.3px;line-height:13.3px;color:#111;transform:scaleX(1.0641);">SOLIDWORKS Premium 2020 SP5.0</span>
<span class="t" id="t90" style="left:1506.20px;top:1184.84px;font-size:13.3px;line-height:13.3px;color:#111;transform:scaleX(1.1407);">Under Defined</span>
<span class="t" id="t91" style="left:1616.20px;top:1184.84px;font-size:13.3px;line-height:13.3px;color:#111;transform:scaleX(1.1524);">Editing Assembly</span>
<span class="t" id="t92" style="left:1810.40px;top:1184.84px;font-size:13.3px;line-height:13.3px;color:#111;transform:scaleX(1.1391);">Custom</span>
<span class="t" id="t93" style="left:1723.80px;top:143.99px;font-size:15.6px;line-height:15.6px;color:#0c0c0c;font-weight:bold;transform:scaleX(0.9306);">SOLIDWORKS Forum</span>
<span class="t" id="t99" style="left:1782.30px;top:516.12px;font-size:11.2px;line-height:11.2px;color:#fff;transform:scaleX(0.9719);">Take me there</span>
<svg class="abs" style="left:0;top:0" width="1920" height="1199" viewBox="0 0 1920 1199"><text class="cj" x="213.89" y="1175.32" font-size="15.59">运动算例</text></svg>
<svg class="abs" style="left:5.00px;top:9.00px" width="21.20" height="20.80" viewBox="0 0 21 21"><g fill="none" stroke="#cf2228" stroke-linecap="round" stroke-linejoin="round"><path d="M7.6,1.4Q13.6,.4 14.4,3.2Q14.6,5.6 9.8,7.6" stroke-width="1.9"/><path d="M9.2,8.2Q7,14 1,19.4Q10.4,17.8 11.6,11.4Q11.8,9.6 8.6,9.6Q5.8,9.8 3.6,11" stroke-width="1.7"/><path d="M19.6,8.4Q14,7.6 13.4,10.4Q13.4,12.4 16.4,13.2Q19.2,14.4 17.6,16.4Q15.4,18.2 11.4,17.2" stroke-width="1.9"/></g></svg>
<svg class="abs" style="left:386.60px;top:16.20px" width="14.40" height="14.40" viewBox="0 0 14 14"><g transform="rotate(40 7 7)"><path d="M4.6,1H9.4L8.8,5.2L10.8,7.4H3.2L5.2,5.2Z" fill="#9b9b9b"/><path d="M7,7.4V13" stroke="#9b9b9b" stroke-width="1.3"/></g></svg>
<svg class="abs" style="left:437.80px;top:11.20px" width="24.40" height="24.40" viewBox="0 0 24 24"><path d="M4.4,12V22.6H19.6V12" fill="#fdfdfd" stroke="#6c6c6c" stroke-width="1.3"/><path d="M1.2,12.6L12,1.6L22.8,12.6" fill="none" stroke="#2f7fb5" stroke-width="2.6" stroke-linejoin="miter"/><path d="M1.2,12.6L12,1.6L22.8,12.6" fill="none" stroke="#8cc9ea" stroke-width=".8"/><rect x="10" y="14.4" width="5" height="8.2" fill="#fff" stroke="#555" stroke-width="1"/><rect x="12.6" y="17.6" width="1.4" height="1.6" fill="#333"/></svg>
<svg class="abs" style="left:479.00px;top:11.40px" width="19.60" height="23.80" viewBox="0 0 20 24"><path d="M1,.8H12.6L19,7.2V23.2H1Z" fill="#f4f4f4" stroke="#8a8a8a" stroke-width="1.2" stroke-linejoin="round"/><path d="M12.6,.8V7.2H19" fill="#dcdcdc" stroke="#8a8a8a" stroke-width="1"/><path d="M3,3V21.4H9" fill="none" stroke="#fff" stroke-width="1.4"/></svg>
<svg class="abs" style="left:527.60px;top:12.20px" width="26.60" height="22.60" viewBox="0 0 27 23"><path d="M1,22V3.4H8.6L10.6,6H19V11" fill="#e9e9e9" stroke="#6c6c6c" stroke-width="1.2" stroke-linejoin="round"/><path d="M1,22L6.4,11H26L20,22Z" fill="#fafafa" stroke="#6c6c6c" stroke-width="1.2" stroke-linejoin="round"/><path d="M10.4,1.2Q16.2,1.6 16.8,8.2H20.6L15,14.6L9.4,8.2H12.8Q12.6,4 10.4,1.2Z" fill="#3aa63a" stroke="#1f7a1f" stroke-width=".9" stroke-linejoin="round"/></svg>
<svg class="abs" style="left:580.30px;top:11.20px" width="24.40" height="24.20" viewBox="0 0 24 24"><path d="M1,1H20.4L23.4,4V23H1Z" fill="#3b8fc7" stroke="#1d5f90" stroke-width="1.3" stroke-linejoin="round"/><rect x="4.6" y="1.6" width="14.8" height="9.6" fill="#f5f5f5" stroke="#1d5f90" stroke-width=".6"/><path d="M6.4,4.2H17.6M6.4,6.4H17.6M6.4,8.6H17.6" stroke="#9a9a9a" stroke-width=".9"/><rect x="5.6" y="14.6" width="13" height="8.4" fill="#d8d8d8" stroke="#1d5f90" stroke-width=".6"/><rect x="8" y="16.2" width="3.4" height="5.6" fill="#2b6f9f"/><path d="M2.2,2.2V21.8" stroke="#7cc0ea" stroke-width="1"/></svg>
<svg class="abs" style="left:633.80px;top:13.00px" width="21.60" height="20.60" viewBox="0 0 22 21.5"><path d="M5,9V1H17V9" fill="#fafafa" stroke="#7a7a7a" stroke-width="1.1"/><rect x="1" y="8.6" width="20" height="9" rx="1.2" fill="#e4e4e4" stroke="#6a6a6a" stroke-width="1.1"/><rect x="2.2" y="14" width="17.6" height="4.2" fill="#2f86c2" stroke="#1d5f90" stroke-width=".6"/><rect x="4" y="17" width="14" height="3.6" fill="#fafafa" stroke="#6a6a6a" stroke-width=".9"/></svg>
<svg class="abs" style="left:685.40px;top:12.00px" width="21.80" height="21.80" viewBox="0 0 22 22"><path d="M2.2,1.4L1.2,10.6L10.2,9.2L7.4,6.8Q13.8,4.6 16,9.8Q17.6,14.8 11.2,19.4L12.8,21.4Q22,15.6 19.6,8Q16.4,.4 5.4,3.8Z" fill="#3b8fc7" stroke="#1d5f90" stroke-width="1" stroke-linejoin="round"/></svg>
<div class="abs" style="left:729.3px;top:3.2px;width:39.3px;height:38.8px;background:#b3b3b3;border:1px solid #9c9c9c;box-sizing:border-box"></div>
<div class="abs" style="left:768.6px;top:3.2px;width:12.6px;height:38.8px;background:#fcfcfc;border:1px solid #c4c4c4;border-left:none;box-sizing:border-box"></div>
<svg class="abs" style="left:740.40px;top:10.40px" width="16.40" height="22.00" viewBox="0 0 18 24"><path d="M2,1L2.4,19.4L7,15L10.2,22.4L13.2,21L10,13.8L16.4,13.4Z" fill="#fff" stroke="#555" stroke-width="1.2" stroke-linejoin="round"/></svg>
<svg class="abs" style="left:795.00px;top:10.30px" width="11.90" height="24.40" viewBox="0 0 12 24"><rect x=".8" y=".8" width="10.4" height="22.4" rx="5.2" fill="#3a3a3a" stroke="#1c1c1c" stroke-width="1"/><circle cx="6" cy="6.6" r="3.4" fill="#e0281e"/><circle cx="5.2" cy="5.6" r="1.2" fill="#ff8a80"/><circle cx="6" cy="17" r="3.4" fill="#2aa22a"/><circle cx="5.2" cy="16" r="1.2" fill="#8ee08e"/></svg>
<svg class="abs" style="left:829.00px;top:11.20px" width="21.20" height="22.40" viewBox="0 0 21.6 22.6"><rect x=".8" y=".8" width="20" height="21" fill="#fafafa" stroke="#6a6a6a" stroke-width="1.3"/><rect x="3.2" y="4" width="5.2" height="3.6" fill="#4aa0d6" stroke="#1d5f90" stroke-width=".6"/><path d="M10.4,5.8H18.4" stroke="#333" stroke-width="1.5"/><rect x="3.2" y="9.6" width="5.2" height="3.6" fill="#4aa0d6" stroke="#1d5f90" stroke-width=".6"/><path d="M10.4,11.4H18.4" stroke="#333" stroke-width="1.5"/><rect x="3.2" y="15.2" width="5.2" height="3.6" fill="#4aa0d6" stroke="#1d5f90" stroke-width=".6"/><path d="M10.4,17.0H18.4" stroke="#333" stroke-width="1.5"/></svg>
<svg class="abs" style="left:865.40px;top:10.20px" width="25.20" height="25.20" viewBox="0 0 24 24"><path d="M23.43,10.04L23.43,13.96L20.02,14.48L19.43,15.92L21.47,18.70L18.70,21.47L15.92,19.43L14.48,20.02L13.96,23.43L10.04,23.43L9.52,20.02L8.08,19.43L5.30,21.47L2.53,18.70L4.57,15.92L3.98,14.48L0.57,13.96L0.57,10.04L3.98,9.52L4.57,8.08L2.53,5.30L5.30,2.53L8.08,4.57L9.52,3.98L10.04,0.57L13.96,0.57L14.48,3.98L15.92,4.57L18.70,2.53L21.47,5.30L19.43,8.08L20.02,9.52Z" fill="#f8f8f8" stroke="#6b6b6b" stroke-width="1.4" stroke-linejoin="round" /><circle cx="12" cy="12" r="3.6" fill="#f6f6f6" stroke="#6b6b6b" stroke-width="1.4"/></svg>
<svg class="abs" style="left:511.20px;top:20.2px" width="6.2" height="3.4"><path d="M0,0H6.2L3.1,3.4Z" fill="#222"/></svg>
<svg class="abs" style="left:563.40px;top:20.2px" width="6.2" height="3.4"><path d="M0,0H6.2L3.1,3.4Z" fill="#222"/></svg>
<svg class="abs" style="left:615.50px;top:20.2px" width="6.2" height="3.4"><path d="M0,0H6.2L3.1,3.4Z" fill="#222"/></svg>
<svg class="abs" style="left:667.90px;top:20.2px" width="6.2" height="3.4"><path d="M0,0H6.2L3.1,3.4Z" fill="#222"/></svg>
<svg class="abs" style="left:719.30px;top:20.2px" width="6.2" height="3.4"><path d="M0,0H6.2L3.1,3.4Z" fill="#222"/></svg>
<svg class="abs" style="left:771.90px;top:20.2px" width="6.2" height="3.4"><path d="M0,0H6.2L3.1,3.4Z" fill="#222"/></svg>
<svg class="abs" style="left:901.40px;top:20.2px" width="6.2" height="3.4"><path d="M0,0H6.2L3.1,3.4Z" fill="#222"/></svg>
<svg class="abs" style="left:1470.50px;top:15.50px" width="14.00" height="13.20" viewBox="0 0 14 13.2"><rect x="0" y="0" width="14" height="13.2" fill="#2b2b2b"/><path d="M2.6,2.8L7,6.4L2.6,10" fill="none" stroke="#fff" stroke-width="1.6"/><path d="M7.4,10.6H11.6" stroke="#fff" stroke-width="1.4"/></svg>
<svg class="abs" style="left:1652.00px;top:16.20px" width="14.20" height="14.20" viewBox="0 0 14.4 14.4"><circle cx="5.6" cy="5.6" r="4.6" fill="none" stroke="#8a8a8a" stroke-width="1.3"/><path d="M9,9L13.6,13.6" stroke="#8a8a8a" stroke-width="1.6"/></svg>
<svg class="abs" style="left:1673.2px;top:21px" width="5.6" height="3.2"><path d="M0,0H5.6L2.8,3.2Z" fill="#777"/></svg>
<svg class="abs" style="left:1698.70px;top:12.70px" width="20.80" height="20.80" viewBox="0 0 20.8 20.8"><circle cx="10.4" cy="10.4" r="9.6" fill="none" stroke="#333" stroke-width="1.3"/><circle cx="10.4" cy="8" r="3.6" fill="none" stroke="#333" stroke-width="1.3"/><path d="M3.8,17Q5,11.8 10.4,11.8Q15.8,11.8 17,17" fill="none" stroke="#333" stroke-width="1.3"/></svg>
<svg class="abs" style="left:1745.00px;top:12.70px" width="20.80" height="20.80" viewBox="0 0 20.8 20.8"><circle cx="10.4" cy="10.4" r="9.6" fill="none" stroke="#333" stroke-width="1.3"/><path d="M7,8Q7,4.6 10.4,4.6Q13.8,4.6 13.8,7.6Q13.8,9.4 11.8,10.4Q10.4,11.2 10.4,13" fill="none" stroke="#222" stroke-width="1.9"/><circle cx="10.4" cy="15.8" r="1.25" fill="#222"/></svg>
<svg class="abs" style="left:1793.80px;top:28.00px" width="15.00" height="3.20" viewBox="0 0 15 3.2"><path d="M0,1.6H15" stroke="#222" stroke-width="3.2"/></svg>
<svg class="abs" style="left:1838.00px;top:14.80px" width="19.00" height="16.40" viewBox="0 0 19 16.4"><rect x="5.4" y=".8" width="12.8" height="9.6" fill="#f6f6f6" stroke="#222" stroke-width="1.3"/><path d="M5.4,2H18.2" stroke="#222" stroke-width="1.6900000000000002"/><rect x=".8" y="6" width="12.8" height="9.6" fill="#f6f6f6" stroke="#222" stroke-width="1.3"/></svg>
<svg class="abs" style="left:1885.00px;top:15.50px" width="16.20" height="15.00" viewBox="0 0 16.2 15"><path d="M.8,.8L15.4,14.2M15.4,.8L.8,14.2" stroke="#222" stroke-width="1.8"/></svg>
<svg class="abs" style="left:32.00px;top:55.60px" width="20.00" height="23.00" viewBox="0 0 24 24"><g transform="translate(2.00,0.00) scale(0.8000)" ><path d="M4.10,1.30L8.20,2.90L8.20,8.90L11.70,10.80L11.70,18.40L0.30,11.10L0.00,7.60L3.50,5.40Z" fill="#e4e4e4" stroke="#b4b4b4" stroke-width="0.9" stroke-linejoin="round" /><path d="M4.10,1.30L9.80,0.00L13.60,1.60L8.20,2.90Z" fill="#f0f0f0" stroke="#b4b4b4" stroke-width="0.9" stroke-linejoin="round" /><path d="M8.20,2.90L13.60,1.60L13.60,7.00L8.20,8.90Z" fill="#d4d4d4" stroke="#b4b4b4" stroke-width="0.9" stroke-linejoin="round" /><path d="M8.20,8.90L13.60,7.00L17.10,8.90L11.70,10.80Z" fill="#f0f0f0" stroke="#b4b4b4" stroke-width="0.9" stroke-linejoin="round" /><path d="M11.70,10.80L17.10,8.90L17.40,14.90L11.70,18.40Z" fill="#d4d4d4" stroke="#b4b4b4" stroke-width="0.9" stroke-linejoin="round" /></g><path d="M12.6,9L4.4,20.6L3,23L5.6,21.8L14.4,10.4Z" fill="#e2e2e2" stroke="#c4c4c4" stroke-width=".9"/></svg>
<svg class="abs" style="left:100.60px;top:49.80px" width="26.00" height="23.60" viewBox="0 0 26 23.6"><g transform="translate(0.00,9.60) scale(0.8200)" ><path d="M.6,16V1.4Q.6,.6 1.4,.6H6.4L8.2,3H17.6Q18.4,3 18.4,3.8V16Z" fill="#fafafa" stroke="#6a6a6a" stroke-width="1.2" stroke-linejoin="round"/></g><path d="M0.6,23L3.6,15.4H17.4L14.6,23Z" fill="#fff" stroke="#6a6a6a" stroke-width="1"/><path d="M2.6,11Q3,5.6 8,4.6V2.4L12.4,6.2L8,10V7.6Q5.4,8 4.8,11Z" fill="#35a135" stroke="#1f7a1f" stroke-width=".7"/><g transform="translate(10.40,1.20) scale(0.8200)" ><path d="M4.10,1.30L8.20,2.90L8.20,8.90L11.70,10.80L11.70,18.40L0.30,11.10L0.00,7.60L3.50,5.40Z" fill="#f6cf1f" stroke="#8a6c00" stroke-width="1.1" stroke-linejoin="round" /><path d="M4.10,1.30L9.80,0.00L13.60,1.60L8.20,2.90Z" fill="#ffe862" stroke="#8a6c00" stroke-width="1.1" stroke-linejoin="round" /><path d="M8.20,2.90L13.60,1.60L13.60,7.00L8.20,8.90Z" fill="#e2b00e" stroke="#8a6c00" stroke-width="1.1" stroke-linejoin="round" /><path d="M8.20,8.90L13.60,7.00L17.10,8.90L11.70,10.80Z" fill="#ffe862" stroke="#8a6c00" stroke-width="1.1" stroke-linejoin="round" /><path d="M11.70,10.80L17.10,8.90L17.40,14.90L11.70,18.40Z" fill="#e2b00e" stroke="#8a6c00" stroke-width="1.1" stroke-linejoin="round" /></g><g transform="translate(15.20,0.00) scale(1.0000)" ><path d="M0.00,2.27L4.20,0.00L8.40,2.27L4.20,4.54Z" fill="#a6dcf5" stroke="#1c5b8c" stroke-width="0.8" stroke-linejoin="round" /><path d="M0.00,2.27L4.20,4.54L4.20,9.41L0.00,7.14Z" fill="#4fa6d8" stroke="#1c5b8c" stroke-width="0.8" stroke-linejoin="round" /><path d="M4.20,4.54L8.40,2.27L8.40,7.14L4.20,9.41Z" fill="#2d7db5" stroke="#1c5b8c" stroke-width="0.8" stroke-linejoin="round" /></g></svg>
<svg class="abs" style="left:158.60px;top:55.00px" width="23.00" height="24.00" viewBox="0 0 23 24"><g transform="rotate(-43 11.5 12)" fill="none" stroke="#1e1e1e" stroke-width="1.7" stroke-linecap="round"><path d="M8.2,6V19.4A3.4,3.4 0 0 0 15,19.4V3.6A4.8,4.8 0 0 0 5.4,3.6V20.2"/><path d="M11.6,5.6V18.6"/></g></svg>
<svg class="abs" style="left:212.00px;top:55.40px" width="23.40" height="22.00" viewBox="0 0 23.4 22"><rect x=".7" y=".7" width="22" height="20.6" fill="#ececec" stroke="#cfcfcf" stroke-width="1.3"/><path d="M.7,3.4H22.7" stroke="#cfcfcf" stroke-width="1.4"/><g transform="translate(5.00,5.40) scale(0.7800)" ><path d="M4.10,1.30L8.20,2.90L8.20,8.90L11.70,10.80L11.70,18.40L0.30,11.10L0.00,7.60L3.50,5.40Z" fill="#e4e4e4" stroke="#b4b4b4" stroke-width="1.1" stroke-linejoin="round" /><path d="M4.10,1.30L9.80,0.00L13.60,1.60L8.20,2.90Z" fill="#f0f0f0" stroke="#b4b4b4" stroke-width="1.1" stroke-linejoin="round" /><path d="M8.20,2.90L13.60,1.60L13.60,7.00L8.20,8.90Z" fill="#d4d4d4" stroke="#b4b4b4" stroke-width="1.1" stroke-linejoin="round" /><path d="M8.20,8.90L13.60,7.00L17.10,8.90L11.70,10.80Z" fill="#f0f0f0" stroke="#b4b4b4" stroke-width="1.1" stroke-linejoin="round" /><path d="M11.70,10.80L17.10,8.90L17.40,14.90L11.70,18.40Z" fill="#d4d4d4" stroke="#b4b4b4" stroke-width="1.1" stroke-linejoin="round" /></g></svg>
<svg class="abs" style="left:306.00px;top:50.40px" width="20.40" height="23.00" viewBox="0 0 20.4 23"><path d="M0.6,0.6h4.2v3.4h3.6v6.6h-7.8z" fill="#f7d020" stroke="#444" stroke-width="1"/><rect x="5" y="7.4" width="2.4" height="2.6" fill="#3b8fc7"/><path d="M12.0,0.6h4.2v3.4h3.6v6.6h-7.8z" fill="#f4f4f4" stroke="#444" stroke-width="1"/><rect x="16.4" y="7.4" width="2.4" height="2.6" fill="#777"/><path d="M0.6,13.0h4.2v3.4h3.6v6.6h-7.8z" fill="#f4f4f4" stroke="#444" stroke-width="1"/><rect x="5" y="19.8" width="2.4" height="2.6" fill="#777"/><path d="M12.0,13.0h4.2v3.4h3.6v6.6h-7.8z" fill="#f4f4f4" stroke="#444" stroke-width="1"/><rect x="16.4" y="19.8" width="2.4" height="2.6" fill="#777"/></svg>
<svg class="abs" style="left:388.00px;top:55.40px" width="23.60" height="22.00" viewBox="0 0 23.6 22"><g transform="translate(0.00,3.00) scale(1.1200)" ><path d="M.6,16V1.4Q.6,.6 1.4,.6H6.4L8.2,3H17.6Q18.4,3 18.4,3.8V16Z" fill="#ededed" stroke="#777" stroke-width="1.2" stroke-linejoin="round"/></g><rect x="3.6" y="9.4" width="5" height="9.6" rx="1" fill="#f6f6f6" stroke="#666" stroke-width="1"/><rect x="8.6" y="12" width="10.4" height="4.4" fill="#f6f6f6" stroke="#666" stroke-width="1"/><path d="M17.4,0L10,8.6H13.6L9.6,15.4L20.6,5.8H16.6L21.6,0Z" fill="#f6a21e" stroke="#c8641a" stroke-width=".8" stroke-linejoin="round"/></svg>
<svg class="abs" style="left:454.00px;top:51.30px" width="24.40" height="22.00" viewBox="0 0 24.4 22"><path d="M1,5.4L6.6,2.6H12V17.6L6.6,21.4L1,18.6Z" fill="#f4f4f4" stroke="#555" stroke-width="1.1" stroke-linejoin="round"/><path d="M6.6,2.6V21.4" stroke="#999" stroke-width=".8"/><path d="M12.6,3L18,.8H23.6V15.4L18,18.4H12.6Z" fill="#f6cf1f" stroke="#6b5600" stroke-width="1.1" stroke-linejoin="round"/><path d="M18,.8V18.4" stroke="#c9a010" stroke-width=".8"/><path d="M9,9.6H16V7L21,10.8L16,14.6V12H9Z" fill="#1e1e1e"/></svg>
<svg class="abs" style="left:532.00px;top:54.60px" width="23.00" height="24.00" viewBox="0 0 23 24"><g transform="translate(9.40,5.40) scale(0.7800)" ><path d="M4.10,1.30L8.20,2.90L8.20,8.90L11.70,10.80L11.70,18.40L0.30,11.10L0.00,7.60L3.50,5.40Z" fill="#fafafa" stroke="#3a3a3a" stroke-width="1.2" stroke-linejoin="round" /><path d="M4.10,1.30L9.80,0.00L13.60,1.60L8.20,2.90Z" fill="#ffffff" stroke="#3a3a3a" stroke-width="1.2" stroke-linejoin="round" /><path d="M8.20,2.90L13.60,1.60L13.60,7.00L8.20,8.90Z" fill="#e4e4e4" stroke="#3a3a3a" stroke-width="1.2" stroke-linejoin="round" /><path d="M8.20,8.90L13.60,7.00L17.10,8.90L11.70,10.80Z" fill="#ffffff" stroke="#3a3a3a" stroke-width="1.2" stroke-linejoin="round" /><path d="M11.70,10.80L17.10,8.90L17.40,14.90L11.70,18.40Z" fill="#e4e4e4" stroke="#3a3a3a" stroke-width="1.2" stroke-linejoin="round" /></g><g transform="translate(0.00,8.60) scale(0.8400)" ><path d="M4.10,1.30L8.20,2.90L8.20,8.90L11.70,10.80L11.70,18.40L0.30,11.10L0.00,7.60L3.50,5.40Z" fill="#f6cf1f" stroke="#8a6c00" stroke-width="1.2" stroke-linejoin="round" /><path d="M4.10,1.30L9.80,0.00L13.60,1.60L8.20,2.90Z" fill="#ffe862" stroke="#8a6c00" stroke-width="1.2" stroke-linejoin="round" /><path d="M8.20,2.90L13.60,1.60L13.60,7.00L8.20,8.90Z" fill="#e2b00e" stroke="#8a6c00" stroke-width="1.2" stroke-linejoin="round" /><path d="M8.20,8.90L13.60,7.00L17.10,8.90L11.70,10.80Z" fill="#ffe862" stroke="#8a6c00" stroke-width="1.2" stroke-linejoin="round" /><path d="M11.70,10.80L17.10,8.90L17.40,14.90L11.70,18.40Z" fill="#e2b00e" stroke="#8a6c00" stroke-width="1.2" stroke-linejoin="round" /></g><path d="M5.4,5.6Q8,1 13.4,2.2" fill="none" stroke="#222" stroke-width="1.5"/><path d="M12.4,.2L15.2,2.8L11.6,4.2Z" fill="#222"/><path d="M3.6,4.4L5,8L7.6,5.2Z" fill="#222"/></svg>
<svg class="abs" style="left:603.70px;top:50.40px" width="20.60" height="23.40" viewBox="0 0 20.6 23.4"><path d="M1,6.4L5.4,3.4H9V20.6L5,23L1,20.6Z" fill="#ececec" stroke="#666" stroke-width="1"/><path d="M1,11H9M1,15.6H9" stroke="#999" stroke-width=".8"/><path d="M6.6,4.6Q7,0.8 13.4,.8Q19.6,.8 19.8,4.6V20.4Q19.6,22.6 17.4,22.6V9.4Q17,7 13.4,7Q10,7 9.6,9.4V22.6Q6.8,22.6 6.6,20.4Z" fill="#3b8fc7" stroke="#1d5f90" stroke-width="1"/><path d="M9.6,22.6V9.4Q10,7 13.4,7Q17,7 17.4,9.4V22.6Z" fill="#63b3e2" stroke="#1d5f90" stroke-width=".7"/><path d="M11.4,8V22M13.6,7.6V22M15.6,8V22" stroke="#2d7db5" stroke-width=".7"/><path d="M9.2,4.4Q10,2.6 13.4,2.6Q16.8,2.6 17.4,4.4" fill="none" stroke="#9ad4f0" stroke-width="1.3"/></svg>
<svg class="abs" style="left:662.80px;top:49.60px" width="23.40" height="24.00" viewBox="0 0 23.4 24"><circle cx="4" cy="3.8" r="3.2" fill="#5cb0e0" stroke="#1d6ea6" stroke-width="1"/><path d="M9,8.4L22.4,5V16.4L9,19.8Z" fill="#4aa3d8" stroke="#1d6ea6" stroke-width="1.1" stroke-linejoin="round"/><path d="M15.4,6.8V18.2" stroke="#bfe4f6" stroke-width="1"/><path d="M15.6,1.4V5.6M15.6,19.6V23.4" stroke="#888" stroke-width="1" stroke-dasharray="2 1.2"/></svg>
<svg class="abs" style="left:718.80px;top:54.40px" width="25.60" height="24.00" viewBox="0 0 25 24"><g transform="translate(9.40,1.20) scale(0.6200)" ><path d="M23.43,10.04L23.43,13.96L20.02,14.48L19.43,15.92L21.47,18.70L18.70,21.47L15.92,19.43L14.48,20.02L13.96,23.43L10.04,23.43L9.52,20.02L8.08,19.43L5.30,21.47L2.53,18.70L4.57,15.92L3.98,14.48L0.57,13.96L0.57,10.04L3.98,9.52L4.57,8.08L2.53,5.30L5.30,2.53L8.08,4.57L9.52,3.98L10.04,0.57L13.96,0.57L14.48,3.98L15.92,4.57L18.70,2.53L21.47,5.30L19.43,8.08L20.02,9.52Z" fill="#f2f2f2" stroke="#777" stroke-width="1.7" stroke-linejoin="round" /><circle cx="12" cy="12" r="3.6" fill="#f6f6f6" stroke="#777" stroke-width="1.7"/></g><g transform="translate(3.00,11.60) scale(0.5000)" ><path d="M23.43,10.04L23.43,13.96L20.02,14.48L19.43,15.92L21.47,18.70L18.70,21.47L15.92,19.43L14.48,20.02L13.96,23.43L10.04,23.43L9.52,20.02L8.08,19.43L5.30,21.47L2.53,18.70L4.57,15.92L3.98,14.48L0.57,13.96L0.57,10.04L3.98,9.52L4.57,8.08L2.53,5.30L5.30,2.53L8.08,4.57L9.52,3.98L10.04,0.57L13.96,0.57L14.48,3.98L15.92,4.57L18.70,2.53L21.47,5.30L19.43,8.08L20.02,9.52Z" fill="#cfcfcf" stroke="#666" stroke-width="2.0" stroke-linejoin="round" /><circle cx="12" cy="12" r="3.6" fill="#f6f6f6" stroke="#666" stroke-width="2.0"/></g><g transform="translate(0.00,0.00) scale(0.3000)" ><path d="M23.43,10.04L23.43,13.96L20.02,14.48L19.43,15.92L21.47,18.70L18.70,21.47L15.92,19.43L14.48,20.02L13.96,23.43L10.04,23.43L9.52,20.02L8.08,19.43L5.30,21.47L2.53,18.70L4.57,15.92L3.98,14.48L0.57,13.96L0.57,10.04L3.98,9.52L4.57,8.08L2.53,5.30L5.30,2.53L8.08,4.57L9.52,3.98L10.04,0.57L13.96,0.57L14.48,3.98L15.92,4.57L18.70,2.53L21.47,5.30L19.43,8.08L20.02,9.52Z" fill="#f08a24" stroke="#d2691e" stroke-width="2.6" stroke-linejoin="round" /><circle cx="12" cy="12" r="3.6" fill="#f6f6f6" stroke="#d2691e" stroke-width="2.6"/></g></svg>
<svg class="abs" style="left:774.60px;top:55.20px" width="24.40" height="23.60" viewBox="0 0 24.4 23.6"><rect x=".7" y=".7" width="16" height="15.4" fill="#fff" stroke="#666" stroke-width="1.1"/><rect x=".7" y=".7" width="16" height="3.6" fill="#4aa0d6" stroke="#1d5f90" stroke-width=".7"/><path d="M.7,8H16.7M.7,12H16.7M6,4.4V16M11.4,4.4V16" stroke="#888" stroke-width=".8"/><g transform="translate(9.00,7.60) scale(0.8600)" ><path d="M4.10,1.30L8.20,2.90L8.20,8.90L11.70,10.80L11.70,18.40L0.30,11.10L0.00,7.60L3.50,5.40Z" fill="#f6cf1f" stroke="#8a6c00" stroke-width="1.2" stroke-linejoin="round" /><path d="M4.10,1.30L9.80,0.00L13.60,1.60L8.20,2.90Z" fill="#ffe862" stroke="#8a6c00" stroke-width="1.2" stroke-linejoin="round" /><path d="M8.20,2.90L13.60,1.60L13.60,7.00L8.20,8.90Z" fill="#e2b00e" stroke="#8a6c00" stroke-width="1.2" stroke-linejoin="round" /><path d="M8.20,8.90L13.60,7.00L17.10,8.90L11.70,10.80Z" fill="#ffe862" stroke="#8a6c00" stroke-width="1.2" stroke-linejoin="round" /><path d="M11.70,10.80L17.10,8.90L17.40,14.90L11.70,18.40Z" fill="#e2b00e" stroke="#8a6c00" stroke-width="1.2" stroke-linejoin="round" /></g><g transform="translate(14.40,6.60) scale(1.0000)" ><path d="M0.00,2.21L4.10,0.00L8.20,2.21L4.10,4.43Z" fill="#a6dcf5" stroke="#1c5b8c" stroke-width="0.8" stroke-linejoin="round" /><path d="M0.00,2.21L4.10,4.43L4.10,9.18L0.00,6.97Z" fill="#4fa6d8" stroke="#1c5b8c" stroke-width="0.8" stroke-linejoin="round" /><path d="M4.10,4.43L8.20,2.21L8.20,6.97L4.10,9.18Z" fill="#2d7db5" stroke="#1c5b8c" stroke-width="0.8" stroke-linejoin="round" /></g></svg>
<svg class="abs" style="left:835.00px;top:49.60px" width="24.60" height="25.00" viewBox="0 0 24.6 25"><g transform="translate(0.00,8.60) scale(0.9000)" ><path d="M4.10,1.30L8.20,2.90L8.20,8.90L11.70,10.80L11.70,18.40L0.30,11.10L0.00,7.60L3.50,5.40Z" fill="#f6cf1f" stroke="#8a6c00" stroke-width="1.2" stroke-linejoin="round" /><path d="M4.10,1.30L9.80,0.00L13.60,1.60L8.20,2.90Z" fill="#ffe862" stroke="#8a6c00" stroke-width="1.2" stroke-linejoin="round" /><path d="M8.20,2.90L13.60,1.60L13.60,7.00L8.20,8.90Z" fill="#e2b00e" stroke="#8a6c00" stroke-width="1.2" stroke-linejoin="round" /><path d="M8.20,8.90L13.60,7.00L17.10,8.90L11.70,10.80Z" fill="#ffe862" stroke="#8a6c00" stroke-width="1.2" stroke-linejoin="round" /><path d="M11.70,10.80L17.10,8.90L17.40,14.90L11.70,18.40Z" fill="#e2b00e" stroke="#8a6c00" stroke-width="1.2" stroke-linejoin="round" /></g><g transform="translate(15.60,0.00) scale(1.0000)" ><path d="M0.00,2.32L4.30,0.00L8.60,2.32L4.30,4.64Z" fill="#a6dcf5" stroke="#1c5b8c" stroke-width="0.8" stroke-linejoin="round" /><path d="M0.00,2.32L4.30,4.64L4.30,9.63L0.00,7.31Z" fill="#4fa6d8" stroke="#1c5b8c" stroke-width="0.8" stroke-linejoin="round" /><path d="M4.30,4.64L8.60,2.32L8.60,7.31L4.30,9.63Z" fill="#2d7db5" stroke="#1c5b8c" stroke-width="0.8" stroke-linejoin="round" /></g><path d="M19.8,10V13.6H14.6" fill="none" stroke="#555" stroke-width="1" stroke-dasharray="1.6 1.2"/></svg>
<svg class="abs" style="left:895.60px;top:55.00px" width="25.40" height="24.00" viewBox="0 0 25.4 24"><path d="M6,0L24.4,8V16.6L6,8.6Z" fill="#f7d84a" stroke="#a88a10" stroke-width=".9" stroke-linejoin="round"/><path d="M10,2V5.4M13.6,3.6V8.6M17.2,5.2V8.6M20.8,6.8V11.8" stroke="#8a6c00" stroke-width="1"/><path d="M.8,11.4L3,9L16,16.8L18,14.2L24.6,23.4L12.4,21.4L14.2,19.2Z" fill="#3f97cf" stroke="#1d5f90" stroke-width="1" stroke-linejoin="round"/><path d="M2.2,10.6L15.2,18.4" stroke="#a6dcf5" stroke-width="1"/></svg>
<svg class="abs" style="left:972.40px;top:54.60px" width="24.60" height="24.00" viewBox="0 0 24.6 24"><g transform="translate(6.40,3.60) scale(0.9800)" ><path d="M4.10,1.30L8.20,2.90L8.20,8.90L11.70,10.80L11.70,18.40L0.30,11.10L0.00,7.60L3.50,5.40Z" fill="#fafafa" stroke="#3a3a3a" stroke-width="1.2" stroke-linejoin="round" /><path d="M4.10,1.30L9.80,0.00L13.60,1.60L8.20,2.90Z" fill="#ffffff" stroke="#3a3a3a" stroke-width="1.2" stroke-linejoin="round" /><path d="M8.20,2.90L13.60,1.60L13.60,7.00L8.20,8.90Z" fill="#e4e4e4" stroke="#3a3a3a" stroke-width="1.2" stroke-linejoin="round" /><path d="M8.20,8.90L13.60,7.00L17.10,8.90L11.70,10.80Z" fill="#ffffff" stroke="#3a3a3a" stroke-width="1.2" stroke-linejoin="round" /><path d="M11.70,10.80L17.10,8.90L17.40,14.90L11.70,18.40Z" fill="#e4e4e4" stroke="#3a3a3a" stroke-width="1.2" stroke-linejoin="round" /></g><g transform="translate(13.60,0.40) scale(1.0000)" ><path d="M0.00,2.48L4.60,0.00L9.20,2.48L4.60,4.97Z" fill="#a6dcf5" stroke="#1c5b8c" stroke-width="0.8" stroke-linejoin="round" /><path d="M0.00,2.48L4.60,4.97L4.60,10.30L0.00,7.82Z" fill="#4fa6d8" stroke="#1c5b8c" stroke-width="0.8" stroke-linejoin="round" /><path d="M4.60,4.97L9.20,2.48L9.20,7.82L4.60,10.30Z" fill="#2d7db5" stroke="#1c5b8c" stroke-width="0.8" stroke-linejoin="round" /></g><g transform="translate(13.60,9.60) scale(1.0000)" ><path d="M0.00,2.48L4.60,0.00L9.20,2.48L4.60,4.97Z" fill="#fff3a0" stroke="#8a6c00" stroke-width="0.8" stroke-linejoin="round" /><path d="M0.00,2.48L4.60,4.97L4.60,10.30L0.00,7.82Z" fill="#f6cf1f" stroke="#8a6c00" stroke-width="0.8" stroke-linejoin="round" /><path d="M4.60,4.97L9.20,2.48L9.20,7.82L4.60,10.30Z" fill="#e2b00e" stroke="#8a6c00" stroke-width="0.8" stroke-linejoin="round" /></g><path d="M7,9.4L.8,22.8H13.4Z" fill="#f9c822" stroke="#9a6a00" stroke-width="1.2" stroke-linejoin="round"/><path d="M7,13.4V18.4" stroke="#222" stroke-width="1.6"/><circle cx="7" cy="20.4" r=".9" fill="#222"/></svg>
<svg class="abs" style="left:1048.30px;top:55.60px" width="23.60" height="21.00" viewBox="0 0 23.6 21"><path d="M6.4,4.6L8.4,1.2H15.4L17.4,4.6" fill="#dcdcdc" stroke="#777" stroke-width="1.1"/><rect x=".8" y="4.4" width="22" height="15.6" rx="2.4" fill="#ededed" stroke="#777" stroke-width="1.3"/><rect x="2.6" y="5.6" width="3.6" height="13.2" rx="1.6" fill="#fafafa" stroke="#999" stroke-width=".8"/><circle cx="14.2" cy="12.4" r="6.2" fill="#8e8e8e" stroke="#5e5e5e" stroke-width="1.2"/><circle cx="14.2" cy="12.4" r="3.4" fill="#b8b8b8" stroke="#6e6e6e" stroke-width="1"/><circle cx="14.2" cy="12.4" r="1.3" fill="#777"/></svg>
<svg class="abs" style="left:1110.40px;top:54.00px" width="22.60" height="25.00" viewBox="0 0 22.6 25"><g transform="translate(0.00,2.40) scale(1.2200)" ><path d="M4.10,1.30L8.20,2.90L8.20,8.90L11.70,10.80L11.70,18.40L0.30,11.10L0.00,7.60L3.50,5.40Z" fill="#f6cf1f" stroke="#8a6c00" stroke-width="1.0" stroke-linejoin="round" /><path d="M4.10,1.30L9.80,0.00L13.60,1.60L8.20,2.90Z" fill="#ffe862" stroke="#8a6c00" stroke-width="1.0" stroke-linejoin="round" /><path d="M8.20,2.90L13.60,1.60L13.60,7.00L8.20,8.90Z" fill="#e2b00e" stroke="#8a6c00" stroke-width="1.0" stroke-linejoin="round" /><path d="M8.20,8.90L13.60,7.00L17.10,8.90L11.70,10.80Z" fill="#ffe862" stroke="#8a6c00" stroke-width="1.0" stroke-linejoin="round" /><path d="M11.70,10.80L17.10,8.90L17.40,14.90L11.70,18.40Z" fill="#e2b00e" stroke="#8a6c00" stroke-width="1.0" stroke-linejoin="round" /></g><g transform="translate(9.20,3.20) scale(1.0000)" ><path d="M0.00,2.97L5.50,0.00L11.00,2.97L5.50,5.94Z" fill="#a6dcf5" stroke="#1c5b8c" stroke-width="0.8" stroke-linejoin="round" /><path d="M0.00,2.97L5.50,5.94L5.50,12.32L0.00,9.35Z" fill="#4fa6d8" stroke="#1c5b8c" stroke-width="0.8" stroke-linejoin="round" /><path d="M5.50,5.94L11.00,2.97L11.00,9.35L5.50,12.32Z" fill="#2d7db5" stroke="#1c5b8c" stroke-width="0.8" stroke-linejoin="round" /></g></svg>
<svg class="abs" style="left:10.00px;top:193.40px" width="20.60" height="23.40" viewBox="0 0 20.6 23.4"><g transform="translate(0.00,2.60) scale(1.1200)" ><path d="M4.10,1.30L8.20,2.90L8.20,8.90L11.70,10.80L11.70,18.40L0.30,11.10L0.00,7.60L3.50,5.40Z" fill="#f6cf1f" stroke="#8a6c00" stroke-width="1.0" stroke-linejoin="round" /><path d="M4.10,1.30L9.80,0.00L13.60,1.60L8.20,2.90Z" fill="#ffe862" stroke="#8a6c00" stroke-width="1.0" stroke-linejoin="round" /><path d="M8.20,2.90L13.60,1.60L13.60,7.00L8.20,8.90Z" fill="#e2b00e" stroke="#8a6c00" stroke-width="1.0" stroke-linejoin="round" /><path d="M8.20,8.90L13.60,7.00L17.10,8.90L11.70,10.80Z" fill="#ffe862" stroke="#8a6c00" stroke-width="1.0" stroke-linejoin="round" /><path d="M11.70,10.80L17.10,8.90L17.40,14.90L11.70,18.40Z" fill="#e2b00e" stroke="#8a6c00" stroke-width="1.0" stroke-linejoin="round" /></g><g transform="translate(8.60,3.00) scale(1.0000)" ><path d="M0.00,2.81L5.20,0.00L10.40,2.81L5.20,5.62Z" fill="#a6dcf5" stroke="#1c5b8c" stroke-width="0.8" stroke-linejoin="round" /><path d="M0.00,2.81L5.20,5.62L5.20,11.65L0.00,8.84Z" fill="#4fa6d8" stroke="#1c5b8c" stroke-width="0.8" stroke-linejoin="round" /><path d="M5.20,5.62L10.40,2.81L10.40,8.84L5.20,11.65Z" fill="#2d7db5" stroke="#1c5b8c" stroke-width="0.8" stroke-linejoin="round" /></g></svg>
<svg class="abs" style="left:48.00px;top:194.40px" width="24.00" height="21.60" viewBox="0 0 24 21.6"><rect x=".8" y=".8" width="22.4" height="20" fill="#fafafa" stroke="#666" stroke-width="1.4"/><rect x=".8" y=".8" width="22.4" height="3.2" fill="#3d8fc4" stroke="#1d5f90" stroke-width=".8"/><rect x="2.6" y="6.2" width="6.4" height="3.4" fill="#4aa0d6" stroke="#1d5f90" stroke-width=".6"/><path d="M11,7.9H21" stroke="#333" stroke-width="1.5"/><rect x="2.6" y="10.8" width="6.4" height="3.4" fill="#4aa0d6" stroke="#1d5f90" stroke-width=".6"/><path d="M11,12.5H21" stroke="#333" stroke-width="1.5"/><rect x="2.6" y="15.4" width="6.4" height="3.4" fill="#4aa0d6" stroke="#1d5f90" stroke-width=".6"/><path d="M11,17.1H21" stroke="#333" stroke-width="1.5"/></svg>
<svg class="abs" style="left:90.00px;top:194.00px" width="20.40" height="23.00" viewBox="0 0 20.4 23"><rect x=".8" y=".8" width="3" height="21.4" fill="#fafafa" stroke="#666" stroke-width="1.2"/><path d="M3.8,6H8M3.8,17H11" stroke="#666" stroke-width="1.3"/><rect x="8" y="1.6" width="8.6" height="9.6" rx="1" fill="#fafafa" stroke="#666" stroke-width="1.3"/><rect x="11" y="11.6" width="8.4" height="9.6" rx="1" fill="#e6e6e6" stroke="#666" stroke-width="1.3"/></svg>
<svg class="abs" style="left:128.00px;top:193.40px" width="24.00" height="24.00" viewBox="0 0 24 24"><circle cx="12" cy="12" r="8" fill="none" stroke="#111" stroke-width="2"/><path d="M12,.4V23.6M.4,12H23.6" stroke="#111" stroke-width="1.8"/></svg>
<svg class="abs" style="left:168.60px;top:193.80px" width="23.20" height="10.40" viewBox="0 0 23.2 10.4"><defs><radialGradient id="dmg" cx=".3" cy=".55" r=".8"><stop offset="0" stop-color="#cfe0ff"/><stop offset=".35" stop-color="#3c64d8"/><stop offset="1" stop-color="#102a8c"/></radialGradient></defs><path d="M0,10.4A11.6,10.4 0 0 1 23.2,10.4Z" fill="url(#dmg)"/><path d="M13,0.1A11.6,10.4 0 0 1 23.2,10.4H14Q16,5 13,.1Z" fill="#1c0c0c"/><path d="M13.6,.2Q18,4 17.6,10.4" fill="none" stroke="#d83a2a" stroke-width="1.3"/></svg>
<svg class="abs" style="left:5.40px;top:226.00px" width="17.60" height="19.80" viewBox="0 0 17.6 19.8"><path d="M.6,1.6H17L10.4,9.4V17.6L7.4,19.2V9.4Z" fill="#f4f4f4" stroke="#6b6b6b" stroke-width="1.2" stroke-linejoin="round"/><path d="M.6,.6H17V3.4H.6Z" fill="#4aa9d6" stroke="#1d6ea6" stroke-width=".9"/></svg>
<svg class="abs" style="left:3.00px;top:253.00px" width="17.40" height="19.40" viewBox="0 0 20.6 23.4"><g transform="translate(0.00,2.60) scale(1.1200)" ><path d="M4.10,1.30L8.20,2.90L8.20,8.90L11.70,10.80L11.70,18.40L0.30,11.10L0.00,7.60L3.50,5.40Z" fill="#f6cf1f" stroke="#8a6c00" stroke-width="1.0" stroke-linejoin="round" /><path d="M4.10,1.30L9.80,0.00L13.60,1.60L8.20,2.90Z" fill="#ffe862" stroke="#8a6c00" stroke-width="1.0" stroke-linejoin="round" /><path d="M8.20,2.90L13.60,1.60L13.60,7.00L8.20,8.90Z" fill="#e2b00e" stroke="#8a6c00" stroke-width="1.0" stroke-linejoin="round" /><path d="M8.20,8.90L13.60,7.00L17.10,8.90L11.70,10.80Z" fill="#ffe862" stroke="#8a6c00" stroke-width="1.0" stroke-linejoin="round" /><path d="M11.70,10.80L17.10,8.90L17.40,14.90L11.70,18.40Z" fill="#e2b00e" stroke="#8a6c00" stroke-width="1.0" stroke-linejoin="round" /></g><g transform="translate(8.60,3.00) scale(1.0000)" ><path d="M0.00,2.81L5.20,0.00L10.40,2.81L5.20,5.62Z" fill="#a6dcf5" stroke="#1c5b8c" stroke-width="0.8" stroke-linejoin="round" /><path d="M0.00,2.81L5.20,5.62L5.20,11.65L0.00,8.84Z" fill="#4fa6d8" stroke="#1c5b8c" stroke-width="0.8" stroke-linejoin="round" /><path d="M5.20,5.62L10.40,2.81L10.40,8.84L5.20,11.65Z" fill="#2d7db5" stroke="#1c5b8c" stroke-width="0.8" stroke-linejoin="round" /></g></svg>
<svg class="abs" style="left:25.00px;top:278.20px" width="19.00" height="16.60" viewBox="0 0 19 16.6"><path d="M.6,16V1.4Q.6,.6 1.4,.6H6.4L8.2,3H17.6Q18.4,3 18.4,3.8V16Z" fill="#fdfdfd" stroke="#5b5b5b" stroke-width="1.2" stroke-linejoin="round"/><circle cx="10.4" cy="9.8" r="4.6" fill="#fff" stroke="#333" stroke-width="1.4"/><path d="M10.4,7V9.8H12.8" fill="none" stroke="#333" stroke-width="1.1"/><path d="M3,9.4L6.6,6.2L7.4,9.6Z" fill="#2f86c2"/><path d="M6.2,8.2Q6.4,6 8.6,5" fill="none" stroke="#2f86c2" stroke-width="1.6"/></svg>
<svg class="abs" style="left:25.00px;top:302.40px" width="19.00" height="16.60" viewBox="0 0 19 16.6"><path d="M.6,16V1.4Q.6,.6 1.4,.6H6.4L8.2,3H17.6Q18.4,3 18.4,3.8V16Z" fill="#fdfdfd" stroke="#5b5b5b" stroke-width="1.2" stroke-linejoin="round"/><circle cx="10.2" cy="9.8" r="5" fill="#fff" stroke="#555" stroke-width="1.2"/><path d="M10,10.4L13.2,6.2" stroke="#2a9aa0" stroke-width="1.5"/><path d="M14.6,8.4A5,5 0 0 1 13.4,13.4" fill="none" stroke="#d8262a" stroke-width="1.9"/><path d="M7,11.8L8,11M6.2,9.4H7.4M7.4,6.8L8.4,7.6" stroke="#777" stroke-width=".7"/></svg>
<svg class="abs" style="left:25.00px;top:326.40px" width="19.00" height="16.60" viewBox="0 0 19 16.6"><path d="M.6,16V1.4Q.6,.6 1.4,.6H6.4L8.2,3H17.6Q18.4,3 18.4,3.8V16Z" fill="#fdfdfd" stroke="#5b5b5b" stroke-width="1.2" stroke-linejoin="round"/><path d="M3.4,15.6L9,3.4H11L16.4,15.6H13L11.8,12.4H8L6.8,15.6Z" fill="#2f7fb5" stroke="#1d5f90" stroke-width=".6"/><path d="M8.8,10.2H11L9.9,7Z" fill="#fff"/><path d="M4,15.8H8M12,15.8H16" stroke="#123" stroke-width="1"/></svg>
<svg class="abs" style="left:28.40px;top:349.20px" width="12.80" height="18.00" viewBox="0 0 12.8 18"><path d="M.6,4.2L12.2,.8V13L.6,16.6Z" fill="#fdfdfd" stroke="#7a7a7a" stroke-width="1.1" stroke-linejoin="round"/><path d="M6.4,0V18" stroke="#777" stroke-width="1" stroke-dasharray="1.5 1.3"/></svg>
<svg class="abs" style="left:28.40px;top:373.20px" width="12.80" height="18.00" viewBox="0 0 12.8 18"><path d="M.6,4.2L12.2,.8V13L.6,16.6Z" fill="#fdfdfd" stroke="#7a7a7a" stroke-width="1.1" stroke-linejoin="round"/><path d="M6.4,0V18" stroke="#777" stroke-width="1" stroke-dasharray="1.5 1.3"/></svg>
<svg class="abs" style="left:28.40px;top:397.20px" width="12.80" height="18.00" viewBox="0 0 12.8 18"><path d="M.6,4.2L12.2,.8V13L.6,16.6Z" fill="#fdfdfd" stroke="#7a7a7a" stroke-width="1.1" stroke-linejoin="round"/><path d="M6.4,0V18" stroke="#777" stroke-width="1" stroke-dasharray="1.5 1.3"/></svg>
<svg class="abs" style="left:25.40px;top:421.60px" width="18.00" height="17.40" viewBox="0 0 18 17.4"><path d="M3,15V3.6M3,15H14.4" stroke="#1a1a1a" stroke-width="1.3"/><path d="M3,0L.4,4.4H5.6Z M18,15L13.6,12.4V17.6Z" fill="#1a1a1a"/><circle cx="3" cy="15" r="2" fill="#1a1a1a"/></svg>
<svg class="abs" style="left:26.00px;top:445.40px" width="17.80" height="18.80" viewBox="0 0 17.8 18.8"><g transform="translate(0.40,0.40) scale(0.9700)" ><path d="M4.10,1.30L8.20,2.90L8.20,8.90L11.70,10.80L11.70,18.40L0.30,11.10L0.00,7.60L3.50,5.40Z" fill="#fafafa" stroke="#3a3a3a" stroke-width="1.25" stroke-linejoin="round" /><path d="M4.10,1.30L9.80,0.00L13.60,1.60L8.20,2.90Z" fill="#ffffff" stroke="#3a3a3a" stroke-width="1.25" stroke-linejoin="round" /><path d="M8.20,2.90L13.60,1.60L13.60,7.00L8.20,8.90Z" fill="#e4e4e4" stroke="#3a3a3a" stroke-width="1.25" stroke-linejoin="round" /><path d="M8.20,8.90L13.60,7.00L17.10,8.90L11.70,10.80Z" fill="#ffffff" stroke="#3a3a3a" stroke-width="1.25" stroke-linejoin="round" /><path d="M11.70,10.80L17.10,8.90L17.40,14.90L11.70,18.40Z" fill="#e4e4e4" stroke="#3a3a3a" stroke-width="1.25" stroke-linejoin="round" /></g></svg>
<svg class="abs" style="left:26.00px;top:469.40px" width="17.80" height="18.80" viewBox="0 0 17.8 18.8"><g transform="translate(0.40,0.40) scale(0.9700)" ><path d="M4.10,1.30L8.20,2.90L8.20,8.90L11.70,10.80L11.70,18.40L0.30,11.10L0.00,7.60L3.50,5.40Z" fill="#f6cf1f" stroke="#8a6c00" stroke-width="1.15" stroke-linejoin="round" /><path d="M4.10,1.30L9.80,0.00L13.60,1.60L8.20,2.90Z" fill="#ffe862" stroke="#8a6c00" stroke-width="1.15" stroke-linejoin="round" /><path d="M8.20,2.90L13.60,1.60L13.60,7.00L8.20,8.90Z" fill="#e2b00e" stroke="#8a6c00" stroke-width="1.15" stroke-linejoin="round" /><path d="M8.20,8.90L13.60,7.00L17.10,8.90L11.70,10.80Z" fill="#ffe862" stroke="#8a6c00" stroke-width="1.15" stroke-linejoin="round" /><path d="M11.70,10.80L17.10,8.90L17.40,14.90L11.70,18.40Z" fill="#e2b00e" stroke="#8a6c00" stroke-width="1.15" stroke-linejoin="round" /></g></svg>
<svg class="abs" style="left:26.00px;top:493.40px" width="17.80" height="18.80" viewBox="0 0 17.8 18.8"><g transform="translate(0.40,0.40) scale(0.9700)" ><path d="M4.10,1.30L8.20,2.90L8.20,8.90L11.70,10.80L11.70,18.40L0.30,11.10L0.00,7.60L3.50,5.40Z" fill="#f6cf1f" stroke="#8a6c00" stroke-width="1.15" stroke-linejoin="round" /><path d="M4.10,1.30L9.80,0.00L13.60,1.60L8.20,2.90Z" fill="#ffe862" stroke="#8a6c00" stroke-width="1.15" stroke-linejoin="round" /><path d="M8.20,2.90L13.60,1.60L13.60,7.00L8.20,8.90Z" fill="#e2b00e" stroke="#8a6c00" stroke-width="1.15" stroke-linejoin="round" /><path d="M8.20,8.90L13.60,7.00L17.10,8.90L11.70,10.80Z" fill="#ffe862" stroke="#8a6c00" stroke-width="1.15" stroke-linejoin="round" /><path d="M11.70,10.80L17.10,8.90L17.40,14.90L11.70,18.40Z" fill="#e2b00e" stroke="#8a6c00" stroke-width="1.15" stroke-linejoin="round" /></g></svg>
<svg class="abs" style="left:26.00px;top:517.40px" width="17.80" height="18.80" viewBox="0 0 17.8 18.8"><g transform="translate(0.40,0.40) scale(0.9700)" ><path d="M4.10,1.30L8.20,2.90L8.20,8.90L11.70,10.80L11.70,18.40L0.30,11.10L0.00,7.60L3.50,5.40Z" fill="#fafafa" stroke="#3a3a3a" stroke-width="1.25" stroke-linejoin="round" /><path d="M4.10,1.30L9.80,0.00L13.60,1.60L8.20,2.90Z" fill="#ffffff" stroke="#3a3a3a" stroke-width="1.25" stroke-linejoin="round" /><path d="M8.20,2.90L13.60,1.60L13.60,7.00L8.20,8.90Z" fill="#e4e4e4" stroke="#3a3a3a" stroke-width="1.25" stroke-linejoin="round" /><path d="M8.20,8.90L13.60,7.00L17.10,8.90L11.70,10.80Z" fill="#ffffff" stroke="#3a3a3a" stroke-width="1.25" stroke-linejoin="round" /><path d="M11.70,10.80L17.10,8.90L17.40,14.90L11.70,18.40Z" fill="#e4e4e4" stroke="#3a3a3a" stroke-width="1.25" stroke-linejoin="round" /></g></svg>
<svg class="abs" style="left:26.00px;top:541.40px" width="17.80" height="18.80" viewBox="0 0 17.8 18.8"><g transform="translate(0.40,0.40) scale(0.9700)" ><path d="M4.10,1.30L8.20,2.90L8.20,8.90L11.70,10.80L11.70,18.40L0.30,11.10L0.00,7.60L3.50,5.40Z" fill="#fafafa" stroke="#3a3a3a" stroke-width="1.25" stroke-linejoin="round" /><path d="M4.10,1.30L9.80,0.00L13.60,1.60L8.20,2.90Z" fill="#ffffff" stroke="#3a3a3a" stroke-width="1.25" stroke-linejoin="round" /><path d="M8.20,2.90L13.60,1.60L13.60,7.00L8.20,8.90Z" fill="#e4e4e4" stroke="#3a3a3a" stroke-width="1.25" stroke-linejoin="round" /><path d="M8.20,8.90L13.60,7.00L17.10,8.90L11.70,10.80Z" fill="#ffffff" stroke="#3a3a3a" stroke-width="1.25" stroke-linejoin="round" /><path d="M11.70,10.80L17.10,8.90L17.40,14.90L11.70,18.40Z" fill="#e4e4e4" stroke="#3a3a3a" stroke-width="1.25" stroke-linejoin="round" /></g></svg>
<svg class="abs" style="left:26.00px;top:565.40px" width="17.80" height="18.80" viewBox="0 0 17.8 18.8"><g transform="translate(0.40,0.40) scale(0.9700)" ><path d="M4.10,1.30L8.20,2.90L8.20,8.90L11.70,10.80L11.70,18.40L0.30,11.10L0.00,7.60L3.50,5.40Z" fill="#fafafa" stroke="#3a3a3a" stroke-width="1.25" stroke-linejoin="round" /><path d="M4.10,1.30L9.80,0.00L13.60,1.60L8.20,2.90Z" fill="#ffffff" stroke="#3a3a3a" stroke-width="1.25" stroke-linejoin="round" /><path d="M8.20,2.90L13.60,1.60L13.60,7.00L8.20,8.90Z" fill="#e4e4e4" stroke="#3a3a3a" stroke-width="1.25" stroke-linejoin="round" /><path d="M8.20,8.90L13.60,7.00L17.10,8.90L11.70,10.80Z" fill="#ffffff" stroke="#3a3a3a" stroke-width="1.25" stroke-linejoin="round" /><path d="M11.70,10.80L17.10,8.90L17.40,14.90L11.70,18.40Z" fill="#e4e4e4" stroke="#3a3a3a" stroke-width="1.25" stroke-linejoin="round" /></g></svg>
<svg class="abs" style="left:25.60px;top:588.80px" width="17.60" height="19.00" viewBox="0 0 17.6 19"><g transform="translate(0.40,0.60) scale(1.0000)" ><path d="M2.2,5V13.4A2,2 0 0 0 6.2,13.4V3A2.8,2.8 0 0 0 .7,3V12" fill="none" stroke="#2f86c2" stroke-width="1.3" stroke-linecap="round"/></g><g transform="translate(9.60,2.40) scale(1.0000)" ><path d="M2.2,5V13.4A2,2 0 0 0 6.2,13.4V3A2.8,2.8 0 0 0 .7,3V12" fill="none" stroke="#2f86c2" stroke-width="1.3" stroke-linecap="round"/></g></svg>
<svg class="abs" style="left:27.20px;top:613.60px" width="15.40" height="18.00" viewBox="0 0 15.4 18"><path d="M.7,3.4L3.4,.7H14.6V14L12,17.2H.7Z" fill="#efefef" stroke="#b8b8b8" stroke-width="1.1" stroke-linejoin="round"/><rect x="3.6" y="5" width="7.4" height="7.4" fill="#fafafa" stroke="#a8a8a8" stroke-width="1"/><rect x="6" y="7" width="4.4" height="4.4" fill="#d8d8d8"/></svg>
<svg class="abs" style="left:743.70px;top:144.40px" width="22.00" height="22.40" viewBox="0 0 22 22.4"><path d="M8.8,13.6L1.8,20.6" stroke="#2f86c2" stroke-width="3.4" stroke-linecap="round"/><path d="M8.8,13.6L1.8,20.6" stroke="#9ad4f0" stroke-width="1.1" stroke-linecap="round"/><circle cx="14.0" cy="8.4" r="7.4" fill="#f3f6fa" stroke="#8a8f96" stroke-width="1.3"/><path d="M14,3.4L15.8,5.6H12.2ZM14,13.4L15.8,11.2H12.2ZM9,8.4L11.2,6.6V10.2ZM19,8.4L16.8,6.6V10.2Z" fill="#8a8f96"/></svg>
<svg class="abs" style="left:773.30px;top:144.00px" width="25.00" height="22.80" viewBox="0 0 25 22.8"><rect x="10.4" y=".8" width="13.6" height="13.6" fill="none" stroke="#777" stroke-width="1" stroke-dasharray="2 1.4"/><path d="M10.0,14.0L1.8,21.0" stroke="#2f86c2" stroke-width="3.4" stroke-linecap="round"/><path d="M10.0,14.0L1.8,21.0" stroke="#9ad4f0" stroke-width="1.1" stroke-linecap="round"/><circle cx="15.0" cy="9.0" r="7.2" fill="#f3f6fa" stroke="#8a8f96" stroke-width="1.3"/></svg>
<svg class="abs" style="left:804.40px;top:145.00px" width="24.00" height="22.00" viewBox="0 0 24 22"><g transform="rotate(-32 12 12)"><rect x="3" y="7" width="17" height="9.6" rx="2.4" fill="#e6e6e6" stroke="#8a8a8a" stroke-width="1.1"/><rect x="18" y="5.6" width="4.6" height="12.4" rx="1.4" fill="#f4f4f4" stroke="#8a8a8a" stroke-width="1"/><ellipse cx="4" cy="11.8" rx="2.4" ry="4.8" fill="#cfcfcf" stroke="#8a8a8a" stroke-width="1"/></g><path d="M23.4,14.4H17.4V12L12.6,16.2L17.4,20.4V18H23.4Z" fill="#3b8fc7" stroke="#1d5f90" stroke-width=".7"/></svg>
<svg class="abs" style="left:834.40px;top:145.40px" width="24.00" height="22.00" viewBox="0 0 24 22"><path d="M1,8Q1,2 9,1.6H15Q23,2 23,8V20.4H15.8V10.6Q15.6,8.4 12,8.4Q8.4,8.4 8.2,10.6V20.4H1Z" fill="#e8e8e8" stroke="#777" stroke-width="1.1"/><path d="M1.6,8.6H7.8V20H1.6Z M16.2,8.6H22.4V20H16.2Z" fill="#3f8fc4" stroke="#1d5f90" stroke-width=".7"/><path d="M2.4,12L7,9M2.4,15.4L7,12.4M2.4,18.8L7,15.8M17,12L21.6,9M17,15.4L21.6,12.4M17,18.8L21.6,15.8" stroke="#bfe0f4" stroke-width=".8"/></svg>
<svg class="abs" style="left:865.40px;top:143.60px" width="25.00" height="24.00" viewBox="0 0 25 24"><g transform="rotate(-32 13 13)"><rect x="4" y="9" width="17" height="9.6" rx="2.4" fill="#e6e6e6" stroke="#8a8a8a" stroke-width="1.1"/><rect x="19" y="7.6" width="4.6" height="12.4" rx="1.4" fill="#f4f4f4" stroke="#8a8a8a" stroke-width="1"/><ellipse cx="5" cy="13.8" rx="2.4" ry="4.8" fill="#cfcfcf" stroke="#8a8a8a" stroke-width="1"/></g><path d="M9.6,0L3,8.4H6.8L2.4,15.4L12.8,6H8.8L13.4,0Z" fill="#f59a1e" stroke="#c8641a" stroke-width=".7"/><path d="M10.4,23L15.4,10.6H17.6L22.6,23H19.6L18.6,20H14.2L13.2,23Z" fill="#2f7fb5" stroke="#1d5f90" stroke-width=".6"/><path d="M15,17.8H17.8L16.4,13.8Z" fill="#eef6fb"/></svg>
<svg class="abs" style="left:896.50px;top:144.00px" width="23.40" height="23.40" viewBox="0 0 23.4 23.4"><path d="M.8,7.4L6.8,1H22.6V16.4L16.6,22.6H.8Z" fill="#fdfdfd" stroke="#555" stroke-width="1"/><path d="M16.6,7.4H.8M16.6,7.4V22.6M16.6,7.4L22.6,1" stroke="#555" stroke-width="1" fill="none"/><rect x=".8" y="7.4" width="15.8" height="15.2" fill="#5fb3e4" stroke="#1d6ea6" stroke-width="1"/><path d="M1.8,8.4H15.6V14Z" fill="#9ad4f0" opacity=".7"/><path d="M11.6,1.6V5.2M10.2,4L11.6,6L13,4ZM22,11.6H18.6M19.8,10.2L17.8,11.6L19.8,13Z" stroke="#222" stroke-width=".9" fill="#222"/></svg>
<svg class="abs" style="left:941.60px;top:144.80px" width="21.20" height="22.40" viewBox="0 0 21.2 22.4"><path d="M.8,4.2L8.4,.8L20.4,3.4V17.2L11.4,21.6L.8,17.6Z" fill="#f2f2f2" stroke="#6b7a86" stroke-width="1"/><path d="M.8,4.2L11.4,7.4V21.6L.8,17.6Z" fill="#4fa6d8" stroke="#1d6ea6" stroke-width="1"/><path d="M.8,4.2L8.4,.8L20.4,3.4L11.4,7.4Z" fill="#b8e2f6" stroke="#1d6ea6" stroke-width="1"/><path d="M11.4,7.4L20.4,3.4V17.2L11.4,21.6Z" fill="#e8e8e8" stroke="#888" stroke-width="1"/><path d="M14.6,6V20M17.6,4.6V18.6" stroke="#fff" stroke-width="1.4"/></svg>
<svg class="abs" style="left:984.40px;top:146.40px" width="24.20" height="19.60" viewBox="0 0 24.2 19.6"><path d="M.6,9Q12,-3.6 23.6,9Q12,21.6 .6,9Z" fill="#d9d9d9" stroke="#8a8a8a" stroke-width="1.1"/><circle cx="11.4" cy="8.4" r="5.4" fill="#3a3a3a"/><path d="M11.4,3V16" stroke="#e8e8e8" stroke-width="1.3"/><circle cx="9" cy="6" r="1.6" fill="#bdbdbd"/><path d="M11.4,14V19" stroke="#333" stroke-width="1.6"/></svg>
<svg class="abs" style="left:1027.60px;top:144.40px" width="25.40" height="22.00" viewBox="0 0 25.4 22"><defs><radialGradient id="bsh" cx=".32" cy=".28" r=".8"><stop offset="0" stop-color="#fff" stop-opacity=".75"/><stop offset=".45" stop-color="#fff" stop-opacity="0"/><stop offset="1" stop-color="#000" stop-opacity=".28"/></radialGradient></defs><path d="M10.6,10.6V0A10.6,10.6 0 0 0 0,10.6Z" fill="#2f6fd0"/><path d="M10.6,10.6H21.2A10.6,10.6 0 0 0 10.6,0Z" fill="#e0282a"/><path d="M10.6,10.6V21.2A10.6,10.6 0 0 0 21.2,10.6Z" fill="#f4c21a"/><path d="M10.6,10.6H0A10.6,10.6 0 0 0 10.6,21.2Z" fill="#2aa63a"/><circle cx="10.6" cy="10.6" r="10.6" fill="url(#bsh)"/><path d="M13.4,18.4L21,9.4L23.6,11.6L16,20.6L12.6,21.6Z" fill="#f0b428" stroke="#8a5a00" stroke-width=".7"/><path d="M21,9.4L22.4,7.8L25,10L23.6,11.6Z" fill="#d85a5a" stroke="#8a3030" stroke-width=".6"/></svg>
<svg class="abs" style="left:1058.30px;top:144.20px" width="24.60" height="23.00" viewBox="0 0 24.6 23"><g transform="translate(3.00,0.00) scale(1.0000)" ><defs><radialGradient id="bsh2" cx=".32" cy=".28" r=".8"><stop offset="0" stop-color="#fff" stop-opacity=".75"/><stop offset=".45" stop-color="#fff" stop-opacity="0"/><stop offset="1" stop-color="#000" stop-opacity=".28"/></radialGradient></defs><path d="M9.2,9.2V0A9.2,9.2 0 0 0 0,9.2Z" fill="#2f6fd0"/><path d="M9.2,9.2H18.4A9.2,9.2 0 0 0 9.2,0Z" fill="#e0282a"/><path d="M9.2,9.2V18.4A9.2,9.2 0 0 0 18.4,9.2Z" fill="#f4c21a"/><path d="M9.2,9.2H0A9.2,9.2 0 0 0 9.2,18.4Z" fill="#2aa63a"/><circle cx="9.2" cy="9.2" r="9.2" fill="url(#bsh2)"/></g><path d="M0,15.6L4.6,11.6H19.6L24.6,15.6V23H0Z" fill="#f4f4f4" stroke="#777" stroke-width=".7"/><rect x="0.0" y="15.6" width="4.1" height="3.7" fill="#3a3a3a"/><rect x="4.1" y="19.3" width="4.1" height="3.7" fill="#3a3a3a"/><rect x="8.2" y="15.6" width="4.1" height="3.7" fill="#3a3a3a"/><rect x="12.3" y="19.3" width="4.1" height="3.7" fill="#3a3a3a"/><rect x="16.4" y="15.6" width="4.1" height="3.7" fill="#3a3a3a"/><rect x="20.5" y="19.3" width="4.1" height="3.7" fill="#3a3a3a"/></svg>
<svg class="abs" style="left:1103.60px;top:146.00px" width="22.00" height="20.40" viewBox="0 0 22 20.4"><rect x=".8" y=".8" width="20.4" height="14.4" fill="#cfd2d4" stroke="#6a6a6a" stroke-width="1.4"/><path d="M2,2H20V8Z" fill="#e4e6e8"/><path d="M11,15.4V19M6,19.6H16" stroke="#555" stroke-width="1.6"/></svg>
<svg class="abs" style="left:927.40px;top:154.2px" width="5.6" height="3.2"><path d="M0,0H5.6L2.8,3.2Z" fill="#8a8a8a"/></svg>
<svg class="abs" style="left:971.20px;top:154.2px" width="5.6" height="3.2"><path d="M0,0H5.6L2.8,3.2Z" fill="#8a8a8a"/></svg>
<svg class="abs" style="left:1015.00px;top:154.2px" width="5.6" height="3.2"><path d="M0,0H5.6L2.8,3.2Z" fill="#8a8a8a"/></svg>
<svg class="abs" style="left:1089.40px;top:154.2px" width="5.6" height="3.2"><path d="M0,0H5.6L2.8,3.2Z" fill="#8a8a8a"/></svg>
<svg class="abs" style="left:1133.60px;top:154.2px" width="5.6" height="3.2"><path d="M0,0H5.6L2.8,3.2Z" fill="#8a8a8a"/></svg>
<svg class="abs" style="left:1537.00px;top:147.50px" width="16.80" height="17.40" viewBox="0 0 16.8 17.4"><rect x=".7" y=".7" width="15.4" height="16" fill="#f2f3f7" stroke="#9a9a9a" stroke-width="1.2"/><path d="M.7,2H16.1" stroke="#9a9a9a" stroke-width="1.6"/><path d="M5.4,6V12.4L2.2,9.2Z" fill="#9a9a9a"/></svg>
<svg class="abs" style="left:1567.60px;top:147.50px" width="16.80" height="17.40" viewBox="0 0 16.8 17.4"><rect x=".7" y=".7" width="15.4" height="16" fill="#f2f3f7" stroke="#9a9a9a" stroke-width="1.2"/><path d="M.7,2H16.1" stroke="#9a9a9a" stroke-width="1.6"/><path d="M11.4,6V12.4L14.6,9.2Z" fill="#9a9a9a"/></svg>
<div class="abs" style="left:1599.5px;top:162.2px;width:14.4px;height:2.6px;background:#9a9a9a"></div>
<svg class="abs" style="left:1628.00px;top:148.60px" width="19.00" height="16.40" viewBox="0 0 19 16.4"><rect x="5.4" y=".8" width="12.8" height="9.6" fill="#eef0f5" stroke="#9a9a9a" stroke-width="1.2"/><path d="M5.4,2H18.2" stroke="#9a9a9a" stroke-width="1.56"/><rect x=".8" y="6" width="12.8" height="9.6" fill="#eef0f5" stroke="#9a9a9a" stroke-width="1.2"/></svg>
<svg class="abs" style="left:1660.00px;top:149.50px" width="15.60" height="14.40" viewBox="0 0 16.2 15"><path d="M.8,.8L15.4,14.2M15.4,.8L.8,14.2" stroke="#9a9a9a" stroke-width="1.5"/></svg>
<svg class="abs" style="left:1876.60px;top:141.80px" width="19.00" height="19.00" viewBox="0 0 24 24"><path d="M23.43,10.04L23.43,13.96L20.02,14.48L19.43,15.92L21.47,18.70L18.70,21.47L15.92,19.43L14.48,20.02L13.96,23.43L10.04,23.43L9.52,20.02L8.08,19.43L5.30,21.47L2.53,18.70L4.57,15.92L3.98,14.48L0.57,13.96L0.57,10.04L3.98,9.52L4.57,8.08L2.53,5.30L5.30,2.53L8.08,4.57L9.52,3.98L10.04,0.57L13.96,0.57L14.48,3.98L15.92,4.57L18.70,2.53L21.47,5.30L19.43,8.08L20.02,9.52Z" fill="#f6f6f6" stroke="#2a2a2a" stroke-width="1.5" stroke-linejoin="round" /><circle cx="12" cy="12" r="3.6" fill="#f6f6f6" stroke="#2a2a2a" stroke-width="1.5"/></svg>
<svg class="abs" style="left:1900.4px;top:143.6px" width="14.4" height="14.4" viewBox="0 0 14 14"><g transform="rotate(40 7 7)"><path d="M4.6,1H9.4L8.8,5.2L10.8,7.4H3.2L5.2,5.2Z" fill="#111"/><path d="M7,7.4V13" stroke="#111" stroke-width="1.3"/></g></svg>
<div class="abs" style="left:1662.4px;top:199.3px;width:25.6px;height:117px;background:#d6d6d6;border:1px solid #9a9a9a;box-sizing:border-box"></div>
<svg class="abs" style="left:1663.20px;top:199.60px" width="24.00" height="23.00" viewBox="0 0 24 24"><path d="M3.6,5.6L10,2L20.4,4.4V18L14,22L3.6,18.6Z" fill="#f6f6f6" stroke="#555" stroke-width="1"/><path d="M7,4V19.6M10.4,3V20.6M13.8,4.2V21.6M17,4V19.8" stroke="#777" stroke-width=".9"/><path d="M3.6,5.6L14,8.4L20.4,4.4M14,8.4V22" fill="none" stroke="#555" stroke-width="1"/></svg>
<svg class="abs" style="left:1663.20px;top:223.60px" width="24.00" height="23.00" viewBox="0 0 24 24"><path d="M1.6,20.4V3.4H8L10,6H19.4V9.6" fill="#e4e4e4" stroke="#666" stroke-width="1.1"/><path d="M1.6,20.4L7,9.6H23L18,20.4Z" fill="#fcfcfc" stroke="#666" stroke-width="1.1" stroke-linejoin="round"/></svg>
<div class="abs" style="left:1662.4px;top:223.4px;width:25.6px;height:1px;background:#9a9a9a"></div>
<svg class="abs" style="left:1663.20px;top:247.00px" width="24.00" height="23.00" viewBox="0 0 24 24"><rect x="1" y="1" width="22" height="21" fill="#f2f2f2" stroke="#888" stroke-width=".8"/><rect x="3" y="4" width="8" height="4" fill="#f6cf1f" stroke="#8a6c00" stroke-width=".9"/><rect x="14.4" y="4" width="6" height="4" fill="#f6cf1f" stroke="#8a6c00" stroke-width=".9"/><path d="M6,12H10V15.6H12V18.4H3.4V15.6H6Z" fill="#f6cf1f" stroke="#8a6c00" stroke-width=".9"/><rect x="14.4" y="13" width="7.6" height="6.4" fill="#d8d8d8" stroke="#777" stroke-width=".8"/><rect x="14.4" y="13" width="7.6" height="1.8" fill="#666"/></svg>
<div class="abs" style="left:1662.4px;top:246.8px;width:25.6px;height:1px;background:#9a9a9a"></div>
<svg class="abs" style="left:1663.20px;top:271.40px" width="24.00" height="23.00" viewBox="0 0 24 24"><g transform="translate(1.20,1.20) scale(1.0000)" ><defs><radialGradient id="bsh3" cx=".32" cy=".28" r=".8"><stop offset="0" stop-color="#fff" stop-opacity=".75"/><stop offset=".45" stop-color="#fff" stop-opacity="0"/><stop offset="1" stop-color="#000" stop-opacity=".28"/></radialGradient></defs><path d="M10.8,10.8V0A10.8,10.8 0 0 0 0,10.8Z" fill="#2f6fd0"/><path d="M10.8,10.8H21.6A10.8,10.8 0 0 0 10.8,0Z" fill="#e0282a"/><path d="M10.8,10.8V21.6A10.8,10.8 0 0 0 21.6,10.8Z" fill="#f4c21a"/><path d="M10.8,10.8H0A10.8,10.8 0 0 0 10.8,21.6Z" fill="#2aa63a"/><circle cx="10.8" cy="10.8" r="10.8" fill="url(#bsh3)"/></g></svg>
<div class="abs" style="left:1662.4px;top:271.2px;width:25.6px;height:1px;background:#9a9a9a"></div>
<svg class="abs" style="left:1663.20px;top:295.20px" width="24.00" height="23.00" viewBox="0 0 24 24"><rect x="1" y="1" width="22" height="21" fill="#fafafa" stroke="#666" stroke-width="1"/><rect x="1" y="1" width="22" height="3" fill="#3d8fc4"/><rect x="3.4" y="6.2" width="5.6" height="3.4" fill="#4aa0d6" stroke="#1d5f90" stroke-width=".5"/><path d="M11,7.9H21" stroke="#333" stroke-width="1.6"/><rect x="3.4" y="11" width="5.6" height="3.4" fill="#4aa0d6" stroke="#1d5f90" stroke-width=".5"/><path d="M11,12.7H21" stroke="#333" stroke-width="1.6"/><rect x="3.4" y="15.8" width="5.6" height="3.4" fill="#4aa0d6" stroke="#1d5f90" stroke-width=".5"/><path d="M11,17.5H21" stroke="#333" stroke-width="1.6"/></svg>
<div class="abs" style="left:1662.4px;top:295.0px;width:25.6px;height:1px;background:#9a9a9a"></div>
<svg class="abs" style="left:1897.40px;top:1180.60px" width="19.40" height="18.40" viewBox="0 0 20 19"><g transform="rotate(35 10 9)"><path d="M.8,4.6L5.4,.8H17.6V14.6H5.4L.8,11Z" fill="#f6f6f6" stroke="#666" stroke-width="1.1" stroke-linejoin="round"/><circle cx="4.6" cy="7.6" r="1.4" fill="none" stroke="#666" stroke-width=".9"/><path d="M8.4,4V11.4M11,4V11.4M13.6,4V11.4" stroke="#777" stroke-width="1"/></g></svg>
<svg class="abs" style="left:220.00px;top:1080.00px" width="70.00" height="64.00" viewBox="0 0 70 64"><path d="M22.6,21.6H39" stroke="#10c010" stroke-width="6.4" stroke-linecap="round"/><path d="M38,24L34,27.6L31,24Z" fill="#10b010"/><rect x="22.6" y="22" width="4.4" height="23.6" fill="#1212a8"/><path d="M20,45H29.4L24.8,55Z" fill="#1212a8"/><rect x="39.6" y="19.2" width="6.6" height="3.6" fill="#b8141a"/><path d="M48,18.4V23.8L55.6,21.1Z" fill="#d8181e"/><path d="M60.2,13L67.4,21M67.4,13L60.2,21" stroke="#e08a8a" stroke-width="1.1"/><path d="M41.6,13.6L43.6,15.8L45.6,13.6M43.6,15.8V17.4" stroke="#9ae09a" stroke-width=".9" fill="none"/><path d="M23.6,54H29L23.6,61.6H29.2" stroke="#4848c8" stroke-width="1.1" fill="none"/></svg>
</body></html>
